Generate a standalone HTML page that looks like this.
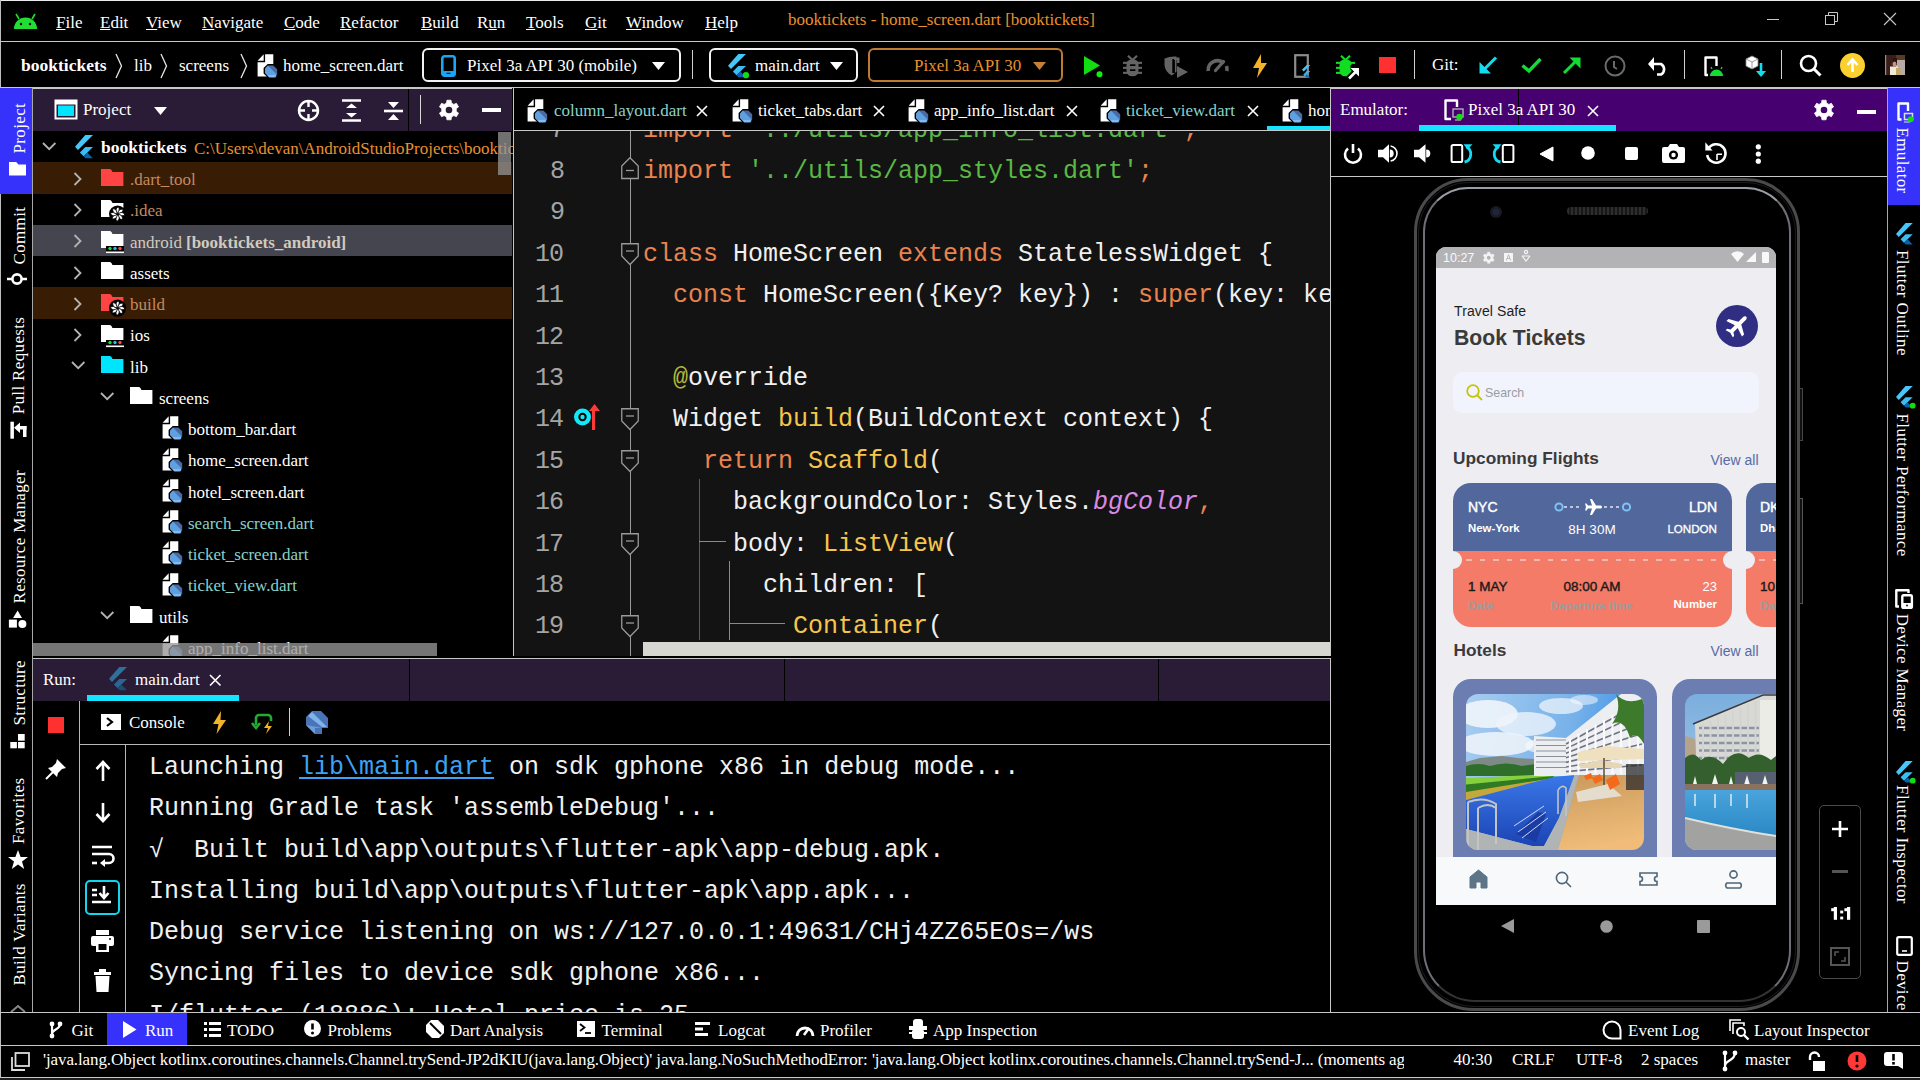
<!DOCTYPE html><html><head><meta charset="utf-8"><title>Android Studio</title><style>
html,body{margin:0;padding:0;background:#000;width:1920px;height:1080px;overflow:hidden}
body{position:relative;font-family:"Liberation Serif",serif}
body>div,body>svg{position:absolute}
.t{position:absolute;line-height:1;white-space:pre}
svg{position:absolute;overflow:visible}

</style></head><body>
<div style="position:absolute;left:0px;top:0px;width:1920px;height:1px;background:#ececec;"></div>
<div style="position:absolute;left:0px;top:0px;width:1px;height:1078px;background:#bdbdbd;"></div>
<div style="position:absolute;left:0px;top:41px;width:1920px;height:1px;background:#c8c8c8;"></div>
<svg style="left:13px;top:13px;" width="25" height="17" viewBox="0 0 25 17"><path d="M1 16 A11.5 11.5 0 0 1 24 16 Z" fill="#22dd33"/><line x1="6" y1="6" x2="3" y2="1" stroke="#22dd33" stroke-width="1.6"/><line x1="19" y1="6" x2="22" y2="1" stroke="#22dd33" stroke-width="1.6"/><circle cx="8" cy="11" r="1.2" fill="#000"/><circle cx="17" cy="11" r="1.2" fill="#000"/></svg>
<div class="t" style="left:56px;top:13.80px;font-size:17px;color:#fff;"><u>F</u>ile</div>
<div class="t" style="left:100px;top:13.80px;font-size:17px;color:#fff;"><u>E</u>dit</div>
<div class="t" style="left:146px;top:13.80px;font-size:17px;color:#fff;"><u>V</u>iew</div>
<div class="t" style="left:202px;top:13.80px;font-size:17px;color:#fff;"><u>N</u>avigate</div>
<div class="t" style="left:284px;top:13.80px;font-size:17px;color:#fff;"><u>C</u>ode</div>
<div class="t" style="left:340px;top:13.80px;font-size:17px;color:#fff;"><u>R</u>efactor</div>
<div class="t" style="left:421px;top:13.80px;font-size:17px;color:#fff;"><u>B</u>uild</div>
<div class="t" style="left:477px;top:13.80px;font-size:17px;color:#fff;">R<u>u</u>n</div>
<div class="t" style="left:526px;top:13.80px;font-size:17px;color:#fff;"><u>T</u>ools</div>
<div class="t" style="left:585px;top:13.80px;font-size:17px;color:#fff;"><u>G</u>it</div>
<div class="t" style="left:626px;top:13.80px;font-size:17px;color:#fff;"><u>W</u>indow</div>
<div class="t" style="left:705px;top:13.80px;font-size:17px;color:#fff;"><u>H</u>elp</div>
<div class="t" style="left:788px;top:11.30px;font-size:17px;color:#e8902e;">booktickets - home_screen.dart [booktickets]</div>
<svg style="left:1767px;top:12px;" width="130" height="15" viewBox="0 0 130 15"><line x1="0" y1="7.5" x2="12" y2="7.5" stroke="#c8c8c8" stroke-width="1"/><rect x="58.5" y="3.5" width="9" height="9" fill="none" stroke="#c8c8c8"/><path d="M61.5 3.5 V0.5 H70.5 V9.5 H67.5" fill="none" stroke="#c8c8c8"/><path d="M117 1 L129 13 M129 1 L117 13" stroke="#c8c8c8" stroke-width="1.1"/></svg>
<div style="position:absolute;left:0px;top:87px;width:1920px;height:1px;background:#c8c8c8;"></div>
<div class="t" style="left:21px;top:56.69px;font-size:17.5px;color:#fff;font-weight:bold;">booktickets</div>
<svg style="left:115px;top:54px;" width="8" height="24" viewBox="0 0 8 24"><path d="M1 0 L6.5 12 L1 24" fill="none" stroke="#e6e6e6" stroke-width="1.3"/></svg>
<div class="t" style="left:134px;top:57.10px;font-size:17px;color:#fff;">lib</div>
<svg style="left:160px;top:54px;" width="8" height="24" viewBox="0 0 8 24"><path d="M1 0 L6.5 12 L1 24" fill="none" stroke="#e6e6e6" stroke-width="1.3"/></svg>
<div class="t" style="left:179px;top:57.10px;font-size:17px;color:#fff;">screens</div>
<svg style="left:240px;top:54px;" width="8" height="24" viewBox="0 0 8 24"><path d="M1 0 L6.5 12 L1 24" fill="none" stroke="#e6e6e6" stroke-width="1.3"/></svg>
<svg style="left:255px;top:54px;" width="24" height="25" viewBox="0 0 24 25"><path d="M2.6 8.3 H10.1 V0.2 H18.3 V22.4 H2.6 Z" fill="#fff"/><path d="M2.6 6.7 L8.7 0.3 V6.7 Z" fill="#fff"/><path d="M13 10.8 H18.6 L22.9 15 V20.6 L20 23.9 H14 L9.3 19.2 V14.4 Z" fill="#4a6aa2" stroke="#000" stroke-width="1.4"/><path d="M10 14.6 L12.9 11.6 L21.2 20 V23.3 H14.2 L10 19 Z" fill="#60a0e0"/><path d="M12.5 21 H21.2 L19.8 23.3 H14.4 Z" fill="#7ebcf2"/></svg>
<div class="t" style="left:283px;top:57.10px;font-size:17px;color:#fff;">home_screen.dart</div>
<div style="left:422px;top:48px;width:255px;height:30px;border:2px solid #f2f2f2;border-radius:6px"></div>
<svg style="left:441px;top:54.5px;" width="15" height="22" viewBox="0 0 15 22"><rect x="1.3" y="1.3" width="12.4" height="19.4" rx="2.2" fill="none" stroke="#1aa6f2" stroke-width="2.6"/><rect x="1.3" y="16" width="12.4" height="4.7" rx="1" fill="#1aa6f2"/><path d="M5.5 18.3 H9.5" stroke="#000" stroke-width="1"/></svg>
<div class="t" style="left:467px;top:56.80px;font-size:17px;color:#fff;">Pixel 3a API 30 (mobile)</div>
<svg style="left:652px;top:62px;" width="14" height="8" viewBox="0 0 14 8"><path d="M0 0 H13 L6.5 8 Z" fill="#fff"/></svg>
<div style="position:absolute;left:692px;top:50px;width:1px;height:29px;background:#d0d0d0;"></div>
<div style="left:709px;top:48px;width:145px;height:30px;border:2px solid #f2f2f2;border-radius:6px"></div>
<svg style="left:727.5px;top:54px;" width="22.0" height="25.0" viewBox="0 0 22.0 25.0"><g transform="scale(1.0)"><path d="M10.3 0 H18 L3 15 L0 11.8 Z" fill="#47c6fa"/><path d="M10.3 12 H18 L8.6 21.3 L4.9 17.5 Z" fill="#3dbbf3"/><path d="M8.6 21.3 L12.3 17.6 L17.9 23.2 H10.5 Z" fill="#0b62ab"/><circle cx="18" cy="21.2" r="3.1" fill="#11dd11"/></g></svg>
<div class="t" style="left:755px;top:56.80px;font-size:17px;color:#fff;">main.dart</div>
<svg style="left:830px;top:62px;" width="14" height="8" viewBox="0 0 14 8"><path d="M0 0 H13 L6.5 8 Z" fill="#fff"/></svg>
<div style="left:868px;top:48px;width:191px;height:30px;border:2px solid #c07a30;border-radius:6px"></div>
<div class="t" style="left:914px;top:56.80px;font-size:17px;color:#e8902e;">Pixel 3a API 30</div>
<svg style="left:1033px;top:62px;" width="14" height="8" viewBox="0 0 14 8"><path d="M0 0 H13 L6.5 8 Z" fill="#c77f33"/></svg>
<svg style="left:1084px;top:56px;" width="20" height="22" viewBox="0 0 20 22"><path d="M0 0 L16 9.5 L0 19 Z" fill="#11dd11"/><circle cx="15.5" cy="18.3" r="3" fill="#11ee11"/></svg>
<svg style="left:1123px;top:55px;" width="19" height="22" viewBox="0 0 19 22"><path d="M5 0.8 L9.5 5 L14 0.8" fill="none" stroke="#646464" stroke-width="2.2"/><path d="M3.5 9 Q3.5 4.5 9.5 4.5 Q15.5 4.5 15.5 9 V15 Q15.5 21.3 9.5 21.3 Q3.5 21.3 3.5 15 Z" fill="#646464"/><rect x="0" y="6.8" width="19" height="2.1" fill="#646464"/><rect x="0" y="11.8" width="19" height="2.1" fill="#646464"/><rect x="0" y="16.8" width="19" height="2.1" fill="#646464"/><rect x="7" y="9.3" width="5.4" height="1.7" fill="#000"/><rect x="7" y="14.3" width="5.4" height="1.7" fill="#000"/></svg>
<svg style="left:1164px;top:56px;" width="24" height="22" viewBox="0 0 24 22"><path d="M0.5 2.5 Q6 0 12.5 0.5 V15.5 L8 19.5 Q1 16 0.5 9 Z" fill="#646464"/><rect x="8.3" y="3" width="2.6" height="14" fill="#000"/><path d="M10 1.5 H15.5 V7 H12.8 V4 H10 Z" fill="#646464"/><path d="M13 10 L24 16 L13 22 Z" fill="#646464"/></svg>
<svg style="left:1206px;top:57px;" width="23" height="16" viewBox="0 0 23 16"><path d="M2.2 14 A9.3 9.3 0 0 1 18 6.5" fill="none" stroke="#646464" stroke-width="3.6"/><path d="M20.5 9 A9.3 9.3 0 0 1 20.8 14" fill="none" stroke="#646464" stroke-width="3.6"/><path d="M9.5 13.5 L17.5 4.5" stroke="#646464" stroke-width="3.2" stroke-linecap="round"/></svg>
<svg style="left:1252px;top:54px;" width="16" height="24" viewBox="0 0 16 24"><path d="M9 0 L1 14 H7 L5 24 L15 9 H9 Z" fill="#f2b32a"/></svg>
<svg style="left:1294px;top:54px;" width="17" height="24" viewBox="0 0 17 24"><rect x="1.2" y="1.2" width="12.6" height="21.6" fill="none" stroke="#8c8c8c" stroke-width="2.2"/><g transform="translate(7,11) scale(0.55)"><path d="M10.5 0 H17 L5 12 L1.5 8.5 Z" fill="#45c4f5"/><path d="M10.5 11 H17 L10.6 17.4 L7.3 14.2 Z" fill="#40b3ee"/><path d="M7.3 14.2 L10.6 17.4 L17 23 H10.5 L7.3 19.8 Z" fill="#0d6cb0"/><path d="M4 17.5 L7.3 14.2 L10.6 17.4 L7.3 20.6 Z" fill="#40b3ee"/></g></svg>
<svg style="left:1336px;top:55px;" width="25" height="25" viewBox="0 0 25 25"><path d="M5 0.8 L9.5 5 L14 0.8" fill="none" stroke="#11dd22" stroke-width="2.2"/><path d="M3.5 9 Q3.5 4.5 9.5 4.5 Q15.5 4.5 15.5 9 V15 Q15.5 21.3 9.5 21.3 Q3.5 21.3 3.5 15 Z" fill="#11dd22"/><rect x="0" y="6.8" width="19" height="2.1" fill="#11dd22"/><rect x="0" y="11.8" width="19" height="2.1" fill="#11dd22"/><rect x="0" y="16.8" width="19" height="2.1" fill="#11dd22"/><path d="M12.5 23 L21.5 14 M14.5 12.5 H22.5 V20.5" fill="none" stroke="#000" stroke-width="5"/><path d="M13 23.5 L21.5 15" stroke="#fff" stroke-width="2.6"/><path d="M14.5 13 H23 V21.5 Z" fill="#fff"/></svg>
<div style="position:absolute;left:1379px;top:57px;width:17px;height:16px;background:#ff3030;"></div>
<div style="position:absolute;left:1414px;top:50px;width:1px;height:29px;background:#d0d0d0;"></div>
<div class="t" style="left:1432px;top:55.80px;font-size:17px;color:#fff;">Git:</div>
<svg style="left:1479px;top:56px;" width="19" height="18" viewBox="0 0 19 18"><path d="M17 1.5 L3 15.5" stroke="#11ddee" stroke-width="3"/><path d="M0.5 6 V17.5 H12 Z" fill="#11ddee"/></svg>
<svg style="left:1521px;top:57px;" width="21" height="16" viewBox="0 0 21 16"><path d="M1.5 8.5 L8 14 L19.5 2" fill="none" stroke="#11dd33" stroke-width="3.4"/></svg>
<svg style="left:1563px;top:57px;" width="18" height="17" viewBox="0 0 18 17"><path d="M1 16 L15 2" stroke="#11dd33" stroke-width="3"/><path d="M6.5 0.5 H17.5 V11.5 Z" fill="#11dd33"/></svg>
<svg style="left:1604px;top:55px;" width="22" height="22" viewBox="0 0 22 22"><circle cx="11" cy="11" r="9.5" fill="none" stroke="#6a6a6a" stroke-width="2"/><path d="M10 6 V12 L13 14" fill="none" stroke="#6a6a6a" stroke-width="2"/></svg>
<svg style="left:1648px;top:55px;" width="21" height="21" viewBox="0 0 21 21"><path d="M4 9 H13 A6 6 0 0 1 13 19.5 H9" fill="none" stroke="#fff" stroke-width="2.6"/><path d="M0 9 L6 2 V16 Z" fill="#fff"/></svg>
<div style="position:absolute;left:1684px;top:50px;width:1px;height:29px;background:#d0d0d0;"></div>
<svg style="left:1704px;top:56px;" width="21" height="21" viewBox="0 0 21 21"><path d="M4 19 H1.5 V1.5 H12.5 V10" fill="none" stroke="#fff" stroke-width="2.4" stroke-linejoin="round"/><path d="M6 20 A6.5 6.5 0 0 1 19 20 Z" fill="#11dd33"/><path d="M8 13 L7 11 M17 13 L18 11" stroke="#11dd33" stroke-width="1.3"/></svg>
<svg style="left:1744px;top:55px;" width="24" height="23" viewBox="0 0 24 23"><path d="M2 4 L8 1 L14 4 V11 L8 14 L2 11 Z" fill="#fff" stroke="#888" stroke-width="0.8"/><path d="M2 4 L8 7 L14 4 M8 7 V14" stroke="#888" stroke-width="0.8" fill="none"/><path d="M17 8 V19" stroke="#11ddee" stroke-width="2.6"/><path d="M12 16 H22 L17 22 Z" fill="#11ddee"/></svg>
<div style="position:absolute;left:1781px;top:50px;width:1px;height:29px;background:#d0d0d0;"></div>
<svg style="left:1799px;top:54px;" width="23" height="23" viewBox="0 0 23 23"><circle cx="9.5" cy="9.5" r="7.5" fill="none" stroke="#fff" stroke-width="2.6"/><path d="M15 15 L21.5 21.5" stroke="#fff" stroke-width="3"/></svg>
<svg style="left:1840px;top:53px;" width="25" height="25" viewBox="0 0 25 25"><circle cx="12.5" cy="12.5" r="12.5" fill="#fcd02e"/><path d="M12.5 19 V7 M7.5 12 L12.5 6.5 L17.5 12" fill="none" stroke="#fff" stroke-width="2.6"/></svg>
<svg style="left:1885px;top:55px;filter:blur(0.4px)" width="20" height="20" viewBox="0 0 20 20"><rect width="20" height="20" fill="#3a1f18"/><rect x="0" y="0" width="1.2" height="20" fill="#9a8a88"/><rect x="11" y="0" width="9" height="5" fill="#5a3a22"/><rect x="11" y="5" width="9" height="15" fill="#b8aca8"/><rect x="8" y="3" width="4" height="7" fill="#2a1410"/><ellipse cx="9.5" cy="9" rx="2" ry="2.5" fill="#c89080"/><rect x="5" y="11.5" width="8" height="8.5" fill="#f0e8d8"/><rect x="11" y="13" width="4.5" height="7" fill="#c8a860"/></svg>
<div style="position:absolute;left:0px;top:88px;width:33px;height:106px;background:#3631fb;"></div>
<div style="position:absolute;left:32px;top:88px;width:1px;height:924px;background:#a8a8a8;"></div>
<div class="t" style="left:-6.50px;top:119.50px;width:50px;font-size:17px;color:#fff;transform:rotate(-90deg);text-align:center;letter-spacing:0.35px;">Project</div>
<svg style="left:9px;top:162px;" width="17" height="14" viewBox="0 0 17 14"><path d="M0 0 H6.5 Q7.5 0 8.2 1 L9.3 2.6 H17 V13.6 H0 Z" fill="#fff"/></svg>
<div class="t" style="left:-8.50px;top:228.50px;width:54px;font-size:17px;color:#fff;transform:rotate(-90deg);text-align:center;letter-spacing:0.35px;">Commit</div>
<svg style="left:7px;top:272px;" width="20" height="14" viewBox="0 0 20 14"><circle cx="10" cy="7" r="4.6" fill="none" stroke="#fff" stroke-width="2.6"/><path d="M0 7 H5.2 M14.8 7 H20" stroke="#fff" stroke-width="2.6"/></svg>
<div class="t" style="left:-37.00px;top:357.00px;width:111px;font-size:17px;color:#fff;transform:rotate(-90deg);text-align:center;letter-spacing:0.35px;">Pull Requests</div>
<svg style="left:10px;top:421px;" width="17" height="18" viewBox="0 0 17 18"><rect x="0.4" y="0.7" width="3.5" height="17" fill="#fff"/><path d="M4 6.7 L10 1.5 V12 Z" fill="#fff"/><rect x="9" y="5" width="7.5" height="3.5" fill="#fff"/><rect x="13" y="5" width="3.5" height="11" fill="#fff"/></svg>
<div class="t" style="left:-47.50px;top:528.50px;width:132px;font-size:17px;color:#fff;transform:rotate(-90deg);text-align:center;letter-spacing:0.35px;">Resource Manager</div>
<svg style="left:8px;top:610px;" width="19" height="19" viewBox="0 0 19 19"><path d="M9.6 0.4 L14 8 H5.1 Z" fill="#fff"/><rect x="0.9" y="9.6" width="8" height="8" fill="#fff"/><circle cx="14.4" cy="14" r="4" fill="#fff"/></svg>
<div class="t" style="left:-13.50px;top:684.50px;width:64px;font-size:17px;color:#fff;transform:rotate(-90deg);text-align:center;letter-spacing:0.35px;">Structure</div>
<svg style="left:10px;top:733px;" width="15" height="16" viewBox="0 0 15 16"><rect x="8" y="1" width="6.7" height="6.7" fill="#fff"/><rect x="0.3" y="9" width="6.6" height="6.3" fill="#fff"/><rect x="8" y="9" width="6.7" height="6.3" fill="#fff"/></svg>
<div class="t" style="left:-14.00px;top:803.00px;width:65px;font-size:17px;color:#fff;transform:rotate(-90deg);text-align:center;letter-spacing:0.35px;">Favorites</div>
<svg style="left:8px;top:850px;" width="20" height="20" viewBox="0 0 20 20"><path d="M10 0 L12.6 7 H20 L14 11.5 L16.2 19 L10 14.5 L3.8 19 L6 11.5 L0 7 H7.4 Z" fill="#fff"/></svg>
<div class="t" style="left:-25.50px;top:932.50px;width:88px;font-size:17px;color:#fff;transform:rotate(-90deg);text-align:center;letter-spacing:0.35px;">Build Variants</div>
<svg style="left:10px;top:1004px;" width="16" height="8" viewBox="0 0 16 8"><path d="M1 8 L8 2 L15 8" fill="none" stroke="#888" stroke-width="2"/></svg>
<div style="position:absolute;left:33px;top:88px;width:480px;height:1px;background:#c8c8c8;"></div>
<div style="position:absolute;left:33px;top:89px;width:479px;height:42px;background:#2a1b36;"></div>
<div style="position:absolute;left:408px;top:89px;width:1px;height:42px;background:#000;"></div>
<svg style="left:54px;top:99px;" width="24" height="21" viewBox="0 0 24 21"><rect x="1.5" y="1.5" width="21" height="18" fill="none" stroke="#fff" stroke-width="2"/><rect x="1.5" y="1.5" width="21" height="4" fill="#fff"/><rect x="4" y="6.5" width="16" height="10.5" fill="#00e5ff"/></svg>
<div class="t" style="left:83px;top:101.31px;font-size:17px;color:#fff;">Project</div>
<svg style="left:154px;top:107px;" width="14" height="8" viewBox="0 0 14 8"><path d="M0 0 H13 L6.5 8 Z" fill="#fff"/></svg>
<svg style="left:297px;top:99px;" width="23" height="23" viewBox="0 0 23 23"><circle cx="11.5" cy="11.5" r="9.5" fill="none" stroke="#fff" stroke-width="2.4"/><path d="M11.5 2 V8 M11.5 15 V21 M2 11.5 H8 M15 11.5 H21" stroke="#fff" stroke-width="2.4"/></svg>
<svg style="left:342px;top:99px;" width="19" height="23" viewBox="0 0 19 23"><path d="M0 1.5 H19 M0 21.5 H19" stroke="#fff" stroke-width="2.6"/><path d="M4 9 L9.5 4.5 L15 9 Z M4 14 L9.5 18.5 L15 14 Z" fill="#fff"/></svg>
<svg style="left:384px;top:101px;" width="19" height="20" viewBox="0 0 19 20"><path d="M0 10 H19" stroke="#fff" stroke-width="2.6"/><path d="M4 1 H15 L9.5 7 Z M4 19 H15 L9.5 13 Z" fill="#fff"/></svg>
<div style="position:absolute;left:420px;top:95px;width:1px;height:29px;background:#d8d8d8;"></div>
<svg style="left:439px;top:100px;" width="20" height="20" viewBox="0 0 20 20"><g transform="scale(1.0)"><polygon points="7.59,3.00 7.92,0.22 12.08,0.22 12.41,3.00 14.85,4.42 17.43,3.31 19.51,6.91 17.26,8.59 17.26,11.41 19.51,13.09 17.43,16.69 14.85,15.58 12.41,17.00 12.08,19.78 7.92,19.78 7.59,17.00 5.15,15.58 2.57,16.69 0.49,13.09 2.74,11.41 2.74,8.59 0.49,6.91 2.57,3.31 5.15,4.42" fill="#fff" stroke="#fff" stroke-width="0.8" stroke-linejoin="round"/><circle cx="10" cy="10" r="3.3" fill="#2a1b36"/></g></svg>
<div style="position:absolute;left:482px;top:108px;width:19px;height:4px;background:#fff;"></div>
<div style="position:absolute;left:512px;top:88px;width:1px;height:570px;background:#000;"></div>
<div style="position:absolute;left:33px;top:162.25px;width:479px;height:31.25px;background:#381d04;"></div>
<div style="position:absolute;left:33px;top:224.75px;width:479px;height:31.25px;background:#45454f;"></div>
<div style="position:absolute;left:33px;top:287.25px;width:479px;height:31.25px;background:#381d04;"></div>
<svg style="left:42.2px;top:141.7px;" width="15" height="9" viewBox="0 0 15 9"><path d="M1 1 L7.2 7.2 L13.4 1" fill="none" stroke="#b4b4b4" stroke-width="1.8"/></svg>
<svg style="left:75px;top:135.0px;" width="22.0" height="25.0" viewBox="0 0 22.0 25.0"><g transform="scale(1.0)"><path d="M10.3 0 H18 L3 15 L0 11.8 Z" fill="#47c6fa"/><path d="M10.3 12 H18 L8.6 21.3 L4.9 17.5 Z" fill="#3dbbf3"/><path d="M8.6 21.3 L12.3 17.6 L17.9 23.2 H10.5 Z" fill="#0b62ab"/></g></svg>
<div class="t" style="left:101px;top:139.39px;font-size:17.5px;color:#fff;font-weight:bold;">booktickets</div>
<div class="t" style="left:194px;top:139.81px;font-size:17px;color:#e8902e;">C:\Users\devan\AndroidStudioProjects\booktickets</div>
<svg style="left:73px;top:171.75px;" width="10" height="14" viewBox="0 0 10 14"><path d="M1.5 1 L7.5 7 L1.5 13" fill="none" stroke="#b4b4b4" stroke-width="1.8"/></svg>
<svg style="left:101px;top:168.65px;" width="24" height="24" viewBox="0 0 24 24"><path d="M0 0 H8.5 Q9.8 0 10.6 1.2 L11.5 3 H22.4 V17.1 H0 Z" fill="#ff4444"/></svg>
<div class="t" style="left:130px;top:171.06px;font-size:17px;color:#c48a62;">.dart_tool</div>
<svg style="left:73px;top:203.0px;" width="10" height="14" viewBox="0 0 10 14"><path d="M1.5 1 L7.5 7 L1.5 13" fill="none" stroke="#b4b4b4" stroke-width="1.8"/></svg>
<svg style="left:101px;top:199.9px;" width="24" height="24" viewBox="0 0 24 24"><path d="M0 0 H8.5 Q9.8 0 10.6 1.2 L11.5 3 H22.4 V17.1 H0 Z" fill="#fff"/><g transform="translate(16.6,14.1)"><circle r="8.6" fill="#000"/><path d="M0 -0.6 C-2.2 -2.6 -2.2 -6 0.9 -7.2 C2.2 -5.2 1.6 -2.4 0 -0.6 Z" fill="#fff" stroke="#000" stroke-width="0.8" transform="rotate(0)"/><path d="M0 -0.6 C-2.2 -2.6 -2.2 -6 0.9 -7.2 C2.2 -5.2 1.6 -2.4 0 -0.6 Z" fill="#fff" stroke="#000" stroke-width="0.8" transform="rotate(45)"/><path d="M0 -0.6 C-2.2 -2.6 -2.2 -6 0.9 -7.2 C2.2 -5.2 1.6 -2.4 0 -0.6 Z" fill="#fff" stroke="#000" stroke-width="0.8" transform="rotate(90)"/><path d="M0 -0.6 C-2.2 -2.6 -2.2 -6 0.9 -7.2 C2.2 -5.2 1.6 -2.4 0 -0.6 Z" fill="#fff" stroke="#000" stroke-width="0.8" transform="rotate(135)"/><path d="M0 -0.6 C-2.2 -2.6 -2.2 -6 0.9 -7.2 C2.2 -5.2 1.6 -2.4 0 -0.6 Z" fill="#fff" stroke="#000" stroke-width="0.8" transform="rotate(180)"/><path d="M0 -0.6 C-2.2 -2.6 -2.2 -6 0.9 -7.2 C2.2 -5.2 1.6 -2.4 0 -0.6 Z" fill="#fff" stroke="#000" stroke-width="0.8" transform="rotate(225)"/><path d="M0 -0.6 C-2.2 -2.6 -2.2 -6 0.9 -7.2 C2.2 -5.2 1.6 -2.4 0 -0.6 Z" fill="#fff" stroke="#000" stroke-width="0.8" transform="rotate(270)"/><path d="M0 -0.6 C-2.2 -2.6 -2.2 -6 0.9 -7.2 C2.2 -5.2 1.6 -2.4 0 -0.6 Z" fill="#fff" stroke="#000" stroke-width="0.8" transform="rotate(315)"/></g></svg>
<div class="t" style="left:130px;top:202.31px;font-size:17px;color:#c48a62;">.idea</div>
<svg style="left:73px;top:234.25px;" width="10" height="14" viewBox="0 0 10 14"><path d="M1.5 1 L7.5 7 L1.5 13" fill="none" stroke="#b4b4b4" stroke-width="1.8"/></svg>
<svg style="left:101px;top:231.15px;" width="24" height="24" viewBox="0 0 24 24"><path d="M0 0 H8.5 Q9.8 0 10.6 1.2 L11.5 3 H22.4 V17.1 H0 Z" fill="#fff"/><rect x="5" y="15" width="18" height="6" fill="#000"/><circle cx="9" cy="17.5" r="1.7" fill="#11dd33"/><circle cx="14" cy="17.5" r="1.7" fill="#22bbee"/><circle cx="19" cy="17.5" r="1.7" fill="#ff4444"/><rect x="5" y="20.5" width="18" height="1.6" fill="#fff"/></svg>
<div class="t" style="left:130px;top:233.56px;font-size:17px;color:#d2cabe;">android </div>
<div class="t" style="left:186px;top:233.56px;font-size:17px;color:#d2cabe;font-weight:bold;">[booktickets_android]</div>
<svg style="left:73px;top:265.5px;" width="10" height="14" viewBox="0 0 10 14"><path d="M1.5 1 L7.5 7 L1.5 13" fill="none" stroke="#b4b4b4" stroke-width="1.8"/></svg>
<svg style="left:101px;top:262.4px;" width="24" height="24" viewBox="0 0 24 24"><path d="M0 0 H8.5 Q9.8 0 10.6 1.2 L11.5 3 H22.4 V17.1 H0 Z" fill="#fff"/></svg>
<div class="t" style="left:130px;top:264.81px;font-size:17px;color:#fff;">assets</div>
<svg style="left:73px;top:296.75px;" width="10" height="14" viewBox="0 0 10 14"><path d="M1.5 1 L7.5 7 L1.5 13" fill="none" stroke="#b4b4b4" stroke-width="1.8"/></svg>
<svg style="left:101px;top:293.65px;" width="24" height="24" viewBox="0 0 24 24"><path d="M0 0 H8.5 Q9.8 0 10.6 1.2 L11.5 3 H22.4 V17.1 H0 Z" fill="#ff4444"/><g transform="translate(16.6,14.1)"><circle r="8.6" fill="#000"/><path d="M0 -0.6 C-2.2 -2.6 -2.2 -6 0.9 -7.2 C2.2 -5.2 1.6 -2.4 0 -0.6 Z" fill="#fff" stroke="#000" stroke-width="0.8" transform="rotate(0)"/><path d="M0 -0.6 C-2.2 -2.6 -2.2 -6 0.9 -7.2 C2.2 -5.2 1.6 -2.4 0 -0.6 Z" fill="#fff" stroke="#000" stroke-width="0.8" transform="rotate(45)"/><path d="M0 -0.6 C-2.2 -2.6 -2.2 -6 0.9 -7.2 C2.2 -5.2 1.6 -2.4 0 -0.6 Z" fill="#fff" stroke="#000" stroke-width="0.8" transform="rotate(90)"/><path d="M0 -0.6 C-2.2 -2.6 -2.2 -6 0.9 -7.2 C2.2 -5.2 1.6 -2.4 0 -0.6 Z" fill="#fff" stroke="#000" stroke-width="0.8" transform="rotate(135)"/><path d="M0 -0.6 C-2.2 -2.6 -2.2 -6 0.9 -7.2 C2.2 -5.2 1.6 -2.4 0 -0.6 Z" fill="#fff" stroke="#000" stroke-width="0.8" transform="rotate(180)"/><path d="M0 -0.6 C-2.2 -2.6 -2.2 -6 0.9 -7.2 C2.2 -5.2 1.6 -2.4 0 -0.6 Z" fill="#fff" stroke="#000" stroke-width="0.8" transform="rotate(225)"/><path d="M0 -0.6 C-2.2 -2.6 -2.2 -6 0.9 -7.2 C2.2 -5.2 1.6 -2.4 0 -0.6 Z" fill="#fff" stroke="#000" stroke-width="0.8" transform="rotate(270)"/><path d="M0 -0.6 C-2.2 -2.6 -2.2 -6 0.9 -7.2 C2.2 -5.2 1.6 -2.4 0 -0.6 Z" fill="#fff" stroke="#000" stroke-width="0.8" transform="rotate(315)"/></g></svg>
<div class="t" style="left:130px;top:296.06px;font-size:17px;color:#c48a62;">build</div>
<svg style="left:73px;top:328.0px;" width="10" height="14" viewBox="0 0 10 14"><path d="M1.5 1 L7.5 7 L1.5 13" fill="none" stroke="#b4b4b4" stroke-width="1.8"/></svg>
<svg style="left:101px;top:324.9px;" width="24" height="24" viewBox="0 0 24 24"><path d="M0 0 H8.5 Q9.8 0 10.6 1.2 L11.5 3 H22.4 V17.1 H0 Z" fill="#fff"/><rect x="5" y="15" width="18" height="6" fill="#000"/><circle cx="9" cy="17.5" r="1.7" fill="#11dd33"/><circle cx="14" cy="17.5" r="1.7" fill="#22bbee"/><circle cx="19" cy="17.5" r="1.7" fill="#ff4444"/><rect x="5" y="20.5" width="18" height="1.6" fill="#fff"/></svg>
<div class="t" style="left:130px;top:327.31px;font-size:17px;color:#fff;">ios</div>
<svg style="left:71.2px;top:360.95px;" width="15" height="9" viewBox="0 0 15 9"><path d="M1 1 L7.2 7.2 L13.4 1" fill="none" stroke="#b4b4b4" stroke-width="1.8"/></svg>
<svg style="left:101px;top:356.15px;" width="24" height="24" viewBox="0 0 24 24"><path d="M0 0 H8.5 Q9.8 0 10.6 1.2 L11.5 3 H22.4 V17.1 H0 Z" fill="#00e5ff"/></svg>
<div class="t" style="left:130px;top:358.56px;font-size:17px;color:#fff;">lib</div>
<svg style="left:100.2px;top:392.2px;" width="15" height="9" viewBox="0 0 15 9"><path d="M1 1 L7.2 7.2 L13.4 1" fill="none" stroke="#b4b4b4" stroke-width="1.8"/></svg>
<svg style="left:130px;top:387.4px;" width="24" height="24" viewBox="0 0 24 24"><path d="M0 0 H8.5 Q9.8 0 10.6 1.2 L11.5 3 H22.4 V17.1 H0 Z" fill="#fff"/></svg>
<div class="t" style="left:159px;top:389.81px;font-size:17px;color:#fff;">screens</div>
<svg style="left:160px;top:416.25px;" width="24" height="25" viewBox="0 0 24 25"><path d="M2.6 8.3 H10.1 V0.2 H18.3 V22.4 H2.6 Z" fill="#fff"/><path d="M2.6 6.7 L8.7 0.3 V6.7 Z" fill="#fff"/><path d="M13 10.8 H18.6 L22.9 15 V20.6 L20 23.9 H14 L9.3 19.2 V14.4 Z" fill="#4a6aa2" stroke="#000" stroke-width="1.4"/><path d="M10 14.6 L12.9 11.6 L21.2 20 V23.3 H14.2 L10 19 Z" fill="#60a0e0"/><path d="M12.5 21 H21.2 L19.8 23.3 H14.4 Z" fill="#7ebcf2"/></svg>
<div class="t" style="left:188px;top:421.06px;font-size:17px;color:#fff;">bottom_bar.dart</div>
<svg style="left:160px;top:447.5px;" width="24" height="25" viewBox="0 0 24 25"><path d="M2.6 8.3 H10.1 V0.2 H18.3 V22.4 H2.6 Z" fill="#fff"/><path d="M2.6 6.7 L8.7 0.3 V6.7 Z" fill="#fff"/><path d="M13 10.8 H18.6 L22.9 15 V20.6 L20 23.9 H14 L9.3 19.2 V14.4 Z" fill="#4a6aa2" stroke="#000" stroke-width="1.4"/><path d="M10 14.6 L12.9 11.6 L21.2 20 V23.3 H14.2 L10 19 Z" fill="#60a0e0"/><path d="M12.5 21 H21.2 L19.8 23.3 H14.4 Z" fill="#7ebcf2"/></svg>
<div class="t" style="left:188px;top:452.31px;font-size:17px;color:#fff;">home_screen.dart</div>
<svg style="left:160px;top:478.75px;" width="24" height="25" viewBox="0 0 24 25"><path d="M2.6 8.3 H10.1 V0.2 H18.3 V22.4 H2.6 Z" fill="#fff"/><path d="M2.6 6.7 L8.7 0.3 V6.7 Z" fill="#fff"/><path d="M13 10.8 H18.6 L22.9 15 V20.6 L20 23.9 H14 L9.3 19.2 V14.4 Z" fill="#4a6aa2" stroke="#000" stroke-width="1.4"/><path d="M10 14.6 L12.9 11.6 L21.2 20 V23.3 H14.2 L10 19 Z" fill="#60a0e0"/><path d="M12.5 21 H21.2 L19.8 23.3 H14.4 Z" fill="#7ebcf2"/></svg>
<div class="t" style="left:188px;top:483.56px;font-size:17px;color:#fff;">hotel_screen.dart</div>
<svg style="left:160px;top:510.0px;" width="24" height="25" viewBox="0 0 24 25"><path d="M2.6 8.3 H10.1 V0.2 H18.3 V22.4 H2.6 Z" fill="#fff"/><path d="M2.6 6.7 L8.7 0.3 V6.7 Z" fill="#fff"/><path d="M13 10.8 H18.6 L22.9 15 V20.6 L20 23.9 H14 L9.3 19.2 V14.4 Z" fill="#4a6aa2" stroke="#000" stroke-width="1.4"/><path d="M10 14.6 L12.9 11.6 L21.2 20 V23.3 H14.2 L10 19 Z" fill="#60a0e0"/><path d="M12.5 21 H21.2 L19.8 23.3 H14.4 Z" fill="#7ebcf2"/></svg>
<div class="t" style="left:188px;top:514.80px;font-size:17px;color:#8ad2c8;">search_screen.dart</div>
<svg style="left:160px;top:541.25px;" width="24" height="25" viewBox="0 0 24 25"><path d="M2.6 8.3 H10.1 V0.2 H18.3 V22.4 H2.6 Z" fill="#fff"/><path d="M2.6 6.7 L8.7 0.3 V6.7 Z" fill="#fff"/><path d="M13 10.8 H18.6 L22.9 15 V20.6 L20 23.9 H14 L9.3 19.2 V14.4 Z" fill="#4a6aa2" stroke="#000" stroke-width="1.4"/><path d="M10 14.6 L12.9 11.6 L21.2 20 V23.3 H14.2 L10 19 Z" fill="#60a0e0"/><path d="M12.5 21 H21.2 L19.8 23.3 H14.4 Z" fill="#7ebcf2"/></svg>
<div class="t" style="left:188px;top:546.05px;font-size:17px;color:#8ad2c8;">ticket_screen.dart</div>
<svg style="left:160px;top:572.5px;" width="24" height="25" viewBox="0 0 24 25"><path d="M2.6 8.3 H10.1 V0.2 H18.3 V22.4 H2.6 Z" fill="#fff"/><path d="M2.6 6.7 L8.7 0.3 V6.7 Z" fill="#fff"/><path d="M13 10.8 H18.6 L22.9 15 V20.6 L20 23.9 H14 L9.3 19.2 V14.4 Z" fill="#4a6aa2" stroke="#000" stroke-width="1.4"/><path d="M10 14.6 L12.9 11.6 L21.2 20 V23.3 H14.2 L10 19 Z" fill="#60a0e0"/><path d="M12.5 21 H21.2 L19.8 23.3 H14.4 Z" fill="#7ebcf2"/></svg>
<div class="t" style="left:188px;top:577.30px;font-size:17px;color:#8ad2c8;">ticket_view.dart</div>
<svg style="left:100.2px;top:610.95px;" width="15" height="9" viewBox="0 0 15 9"><path d="M1 1 L7.2 7.2 L13.4 1" fill="none" stroke="#b4b4b4" stroke-width="1.8"/></svg>
<svg style="left:130px;top:606.15px;" width="24" height="24" viewBox="0 0 24 24"><path d="M0 0 H8.5 Q9.8 0 10.6 1.2 L11.5 3 H22.4 V17.1 H0 Z" fill="#fff"/></svg>
<div class="t" style="left:159px;top:608.55px;font-size:17px;color:#fff;">utils</div>
<svg style="left:160px;top:635.0px;" width="24" height="25" viewBox="0 0 24 25"><path d="M2.6 8.3 H10.1 V0.2 H18.3 V22.4 H2.6 Z" fill="#fff"/><path d="M2.6 6.7 L8.7 0.3 V6.7 Z" fill="#fff"/><path d="M13 10.8 H18.6 L22.9 15 V20.6 L20 23.9 H14 L9.3 19.2 V14.4 Z" fill="#4a6aa2" stroke="#000" stroke-width="1.4"/><path d="M10 14.6 L12.9 11.6 L21.2 20 V23.3 H14.2 L10 19 Z" fill="#60a0e0"/><path d="M12.5 21 H21.2 L19.8 23.3 H14.4 Z" fill="#7ebcf2"/></svg>
<div class="t" style="left:188px;top:639.80px;font-size:17px;color:#fff;">app_info_list.dart</div>
<div style="position:absolute;left:33px;top:643px;width:404px;height:13px;background:rgba(150,150,150,0.78);"></div>
<div style="position:absolute;left:498px;top:132px;width:13px;height:43px;background:rgba(150,150,150,0.75);"></div>
<div style="position:absolute;left:33px;top:656px;width:480px;height:2px;background:#000;"></div>
<div style="position:absolute;left:513px;top:87px;width:818px;height:1px;background:#c8c8c8;"></div>
<div style="position:absolute;left:513px;top:88px;width:1px;height:570px;background:#c8c8c8;"></div>
<div style="position:absolute;left:514px;top:88px;width:816px;height:42px;background:#000;"></div>
<div style="position:absolute;left:513px;top:130px;width:818px;height:1px;background:#c8c8c8;"></div>
<div style="position:absolute;left:1330px;top:88px;width:1px;height:924px;background:#c8c8c8;"></div>
<svg style="left:525.4px;top:99px;" width="24" height="25" viewBox="0 0 24 25"><path d="M2.6 8.3 H10.1 V0.2 H18.3 V22.4 H2.6 Z" fill="#fff"/><path d="M2.6 6.7 L8.7 0.3 V6.7 Z" fill="#fff"/><path d="M13 10.8 H18.6 L22.9 15 V20.6 L20 23.9 H14 L9.3 19.2 V14.4 Z" fill="#4a6aa2" stroke="#000" stroke-width="1.4"/><path d="M10 14.6 L12.9 11.6 L21.2 20 V23.3 H14.2 L10 19 Z" fill="#60a0e0"/><path d="M12.5 21 H21.2 L19.8 23.3 H14.4 Z" fill="#7ebcf2"/></svg>
<div class="t" style="left:554px;top:102.10px;font-size:17px;color:#8ad2c8;">column_layout.dart</div>
<svg style="left:696px;top:105px;" width="12" height="12" viewBox="0 0 12 12"><path d="M1 1 L11 11 M11 1 L1 11" stroke="#fff" stroke-width="1.6"/></svg>
<svg style="left:730px;top:99px;" width="24" height="25" viewBox="0 0 24 25"><path d="M2.6 8.3 H10.1 V0.2 H18.3 V22.4 H2.6 Z" fill="#fff"/><path d="M2.6 6.7 L8.7 0.3 V6.7 Z" fill="#fff"/><path d="M13 10.8 H18.6 L22.9 15 V20.6 L20 23.9 H14 L9.3 19.2 V14.4 Z" fill="#4a6aa2" stroke="#000" stroke-width="1.4"/><path d="M10 14.6 L12.9 11.6 L21.2 20 V23.3 H14.2 L10 19 Z" fill="#60a0e0"/><path d="M12.5 21 H21.2 L19.8 23.3 H14.4 Z" fill="#7ebcf2"/></svg>
<div class="t" style="left:758px;top:102.10px;font-size:17px;color:#fff;">ticket_tabs.dart</div>
<svg style="left:873px;top:105px;" width="12" height="12" viewBox="0 0 12 12"><path d="M1 1 L11 11 M11 1 L1 11" stroke="#fff" stroke-width="1.6"/></svg>
<svg style="left:906.4px;top:99px;" width="24" height="25" viewBox="0 0 24 25"><path d="M2.6 8.3 H10.1 V0.2 H18.3 V22.4 H2.6 Z" fill="#fff"/><path d="M2.6 6.7 L8.7 0.3 V6.7 Z" fill="#fff"/><path d="M13 10.8 H18.6 L22.9 15 V20.6 L20 23.9 H14 L9.3 19.2 V14.4 Z" fill="#4a6aa2" stroke="#000" stroke-width="1.4"/><path d="M10 14.6 L12.9 11.6 L21.2 20 V23.3 H14.2 L10 19 Z" fill="#60a0e0"/><path d="M12.5 21 H21.2 L19.8 23.3 H14.4 Z" fill="#7ebcf2"/></svg>
<div class="t" style="left:934px;top:102.10px;font-size:17px;color:#fff;">app_info_list.dart</div>
<svg style="left:1066px;top:105px;" width="12" height="12" viewBox="0 0 12 12"><path d="M1 1 L11 11 M11 1 L1 11" stroke="#fff" stroke-width="1.6"/></svg>
<svg style="left:1098px;top:99px;" width="24" height="25" viewBox="0 0 24 25"><path d="M2.6 8.3 H10.1 V0.2 H18.3 V22.4 H2.6 Z" fill="#fff"/><path d="M2.6 6.7 L8.7 0.3 V6.7 Z" fill="#fff"/><path d="M13 10.8 H18.6 L22.9 15 V20.6 L20 23.9 H14 L9.3 19.2 V14.4 Z" fill="#4a6aa2" stroke="#000" stroke-width="1.4"/><path d="M10 14.6 L12.9 11.6 L21.2 20 V23.3 H14.2 L10 19 Z" fill="#60a0e0"/><path d="M12.5 21 H21.2 L19.8 23.3 H14.4 Z" fill="#7ebcf2"/></svg>
<div class="t" style="left:1126px;top:102.10px;font-size:17px;color:#8ad2c8;">ticket_view.dart</div>
<svg style="left:1247px;top:105px;" width="12" height="12" viewBox="0 0 12 12"><path d="M1 1 L11 11 M11 1 L1 11" stroke="#fff" stroke-width="1.6"/></svg>
<div style="position:absolute;left:514px;top:88px;width:816px;height:42px;overflow:hidden;">
<svg style="left:766px;top:11px;" width="24" height="25" viewBox="0 0 24 25"><path d="M2.6 8.3 H10.1 V0.2 H18.3 V22.4 H2.6 Z" fill="#fff"/><path d="M2.6 6.7 L8.7 0.3 V6.7 Z" fill="#fff"/><path d="M13 10.8 H18.6 L22.9 15 V20.6 L20 23.9 H14 L9.3 19.2 V14.4 Z" fill="#4a6aa2" stroke="#000" stroke-width="1.4"/><path d="M10 14.6 L12.9 11.6 L21.2 20 V23.3 H14.2 L10 19 Z" fill="#60a0e0"/><path d="M12.5 21 H21.2 L19.8 23.3 H14.4 Z" fill="#7ebcf2"/></svg>
<div class="t" style="left:794px;top:14.10px;font-size:17px;color:#fff;">home_screen.dart</div>
</div>
<div style="position:absolute;left:1267px;top:126px;width:63px;height:4px;background:#14e4ff;"></div>
<div style="position:absolute;left:514px;top:131px;width:816px;height:525px;overflow:hidden;background:#131313;">
<div class="t" style="left:36px;top:-13.31px;font-size:25px;color:#a5a5a5;font-family:'Liberation Mono', monospace;letter-spacing:-1px;">7</div>
<div class="t" style="left:36px;top:28.07px;font-size:25px;color:#a5a5a5;font-family:'Liberation Mono', monospace;letter-spacing:-1px;">8</div>
<div class="t" style="left:36px;top:69.45px;font-size:25px;color:#a5a5a5;font-family:'Liberation Mono', monospace;letter-spacing:-1px;">9</div>
<div class="t" style="left:21px;top:110.83px;font-size:25px;color:#a5a5a5;font-family:'Liberation Mono', monospace;letter-spacing:-1px;">10</div>
<div class="t" style="left:21px;top:152.22px;font-size:25px;color:#a5a5a5;font-family:'Liberation Mono', monospace;letter-spacing:-1px;">11</div>
<div class="t" style="left:21px;top:193.60px;font-size:25px;color:#a5a5a5;font-family:'Liberation Mono', monospace;letter-spacing:-1px;">12</div>
<div class="t" style="left:21px;top:234.98px;font-size:25px;color:#a5a5a5;font-family:'Liberation Mono', monospace;letter-spacing:-1px;">13</div>
<div class="t" style="left:21px;top:276.36px;font-size:25px;color:#a5a5a5;font-family:'Liberation Mono', monospace;letter-spacing:-1px;">14</div>
<div class="t" style="left:21px;top:317.74px;font-size:25px;color:#a5a5a5;font-family:'Liberation Mono', monospace;letter-spacing:-1px;">15</div>
<div class="t" style="left:21px;top:359.12px;font-size:25px;color:#a5a5a5;font-family:'Liberation Mono', monospace;letter-spacing:-1px;">16</div>
<div class="t" style="left:21px;top:400.50px;font-size:25px;color:#a5a5a5;font-family:'Liberation Mono', monospace;letter-spacing:-1px;">17</div>
<div class="t" style="left:21px;top:441.88px;font-size:25px;color:#a5a5a5;font-family:'Liberation Mono', monospace;letter-spacing:-1px;">18</div>
<div class="t" style="left:21px;top:483.25px;font-size:25px;color:#a5a5a5;font-family:'Liberation Mono', monospace;letter-spacing:-1px;">19</div>
<div class="t" style="left:21px;top:524.63px;font-size:25px;color:#a5a5a5;font-family:'Liberation Mono', monospace;letter-spacing:-1px;">20</div>
<div class="t" style="left:129px;top:-13.31px;font-size:25px;color:#f0f0f0;font-family:'Liberation Mono', monospace;"><span style="color:#e9844f;">import </span><span style="color:#5ab845;">'../utils/app_info_list.dart'</span><span style="color:#e9844f;">;</span></div>
<div class="t" style="left:129px;top:28.07px;font-size:25px;color:#f0f0f0;font-family:'Liberation Mono', monospace;"><span style="color:#e9844f;">import </span><span style="color:#5ab845;">'../utils/app_styles.dart'</span><span style="color:#e9844f;">;</span></div>
<div class="t" style="left:129px;top:110.83px;font-size:25px;color:#f0f0f0;font-family:'Liberation Mono', monospace;"><span style="color:#e9844f;">class </span><span style="color:#f0f0f0;">HomeScreen </span><span style="color:#e9844f;">extends </span><span style="color:#f0f0f0;">StatelessWidget {</span></div>
<div class="t" style="left:129px;top:152.22px;font-size:25px;color:#f0f0f0;font-family:'Liberation Mono', monospace;"><span style="color:#e9844f;">  const </span><span style="color:#f0f0f0;">HomeScreen({Key? key}) : </span><span style="color:#e9844f;">super</span><span style="color:#f0f0f0;">(key: key);</span></div>
<div class="t" style="left:129px;top:234.98px;font-size:25px;color:#f0f0f0;font-family:'Liberation Mono', monospace;"><span style="color:#f0f0f0;">  </span><span style="color:#b3b83a;">@</span><span style="color:#f0f0f0;">override</span></div>
<div class="t" style="left:129px;top:276.36px;font-size:25px;color:#f0f0f0;font-family:'Liberation Mono', monospace;"><span style="color:#f0f0f0;">  Widget </span><span style="color:#f6c54b;">build</span><span style="color:#f0f0f0;">(BuildContext context) {</span></div>
<div class="t" style="left:129px;top:317.74px;font-size:25px;color:#f0f0f0;font-family:'Liberation Mono', monospace;"><span style="color:#f0f0f0;">    </span><span style="color:#e9844f;">return </span><span style="color:#f6c54b;">Scaffold</span><span style="color:#f0f0f0;">(</span></div>
<div class="t" style="left:129px;top:359.12px;font-size:25px;color:#f0f0f0;font-family:'Liberation Mono', monospace;"><span style="color:#f0f0f0;">      backgroundColor: Styles.</span><span style="color:#d98ae2;font-style:italic;">bgColor</span><span style="color:#e9844f;">,</span></div>
<div class="t" style="left:129px;top:400.50px;font-size:25px;color:#f0f0f0;font-family:'Liberation Mono', monospace;"><span style="color:#f0f0f0;">      body: </span><span style="color:#f6c54b;">ListView</span><span style="color:#f0f0f0;">(</span></div>
<div class="t" style="left:129px;top:441.88px;font-size:25px;color:#f0f0f0;font-family:'Liberation Mono', monospace;"><span style="color:#f0f0f0;">        children: [</span></div>
<div class="t" style="left:129px;top:483.25px;font-size:25px;color:#f0f0f0;font-family:'Liberation Mono', monospace;"><span style="color:#f0f0f0;">          </span><span style="color:#f6c54b;">Container</span><span style="color:#f0f0f0;">(</span></div>
<div style="position:absolute;left:116px;top:0px;width:1px;height:525px;background:#9a9a9a;"></div>
<svg style="left:107px;top:26.19999999999999px;" width="18" height="23" viewBox="0 0 18 23"><path d="M0.75 21.5 H17.25 V9 L9 0.75 L0.75 9 Z" fill="#131313" stroke="#9a9a9a" stroke-width="1.3"/><path d="M5 13.5 H13" stroke="#9a9a9a" stroke-width="1.3"/></svg>
<svg style="left:107px;top:111.95999999999998px;" width="18" height="23" viewBox="0 0 18 23"><path d="M0.75 0.75 H17.25 V13 L9 21.5 L0.75 13 Z" fill="#131313" stroke="#9a9a9a" stroke-width="1.3"/><path d="M5 8 H13" stroke="#9a9a9a" stroke-width="1.3"/></svg>
<svg style="left:107px;top:277.48px;" width="18" height="23" viewBox="0 0 18 23"><path d="M0.75 0.75 H17.25 V13 L9 21.5 L0.75 13 Z" fill="#131313" stroke="#9a9a9a" stroke-width="1.3"/><path d="M5 8 H13" stroke="#9a9a9a" stroke-width="1.3"/></svg>
<svg style="left:107px;top:318.86px;" width="18" height="23" viewBox="0 0 18 23"><path d="M0.75 0.75 H17.25 V13 L9 21.5 L0.75 13 Z" fill="#131313" stroke="#9a9a9a" stroke-width="1.3"/><path d="M5 8 H13" stroke="#9a9a9a" stroke-width="1.3"/></svg>
<svg style="left:107px;top:401.62px;" width="18" height="23" viewBox="0 0 18 23"><path d="M0.75 0.75 H17.25 V13 L9 21.5 L0.75 13 Z" fill="#131313" stroke="#9a9a9a" stroke-width="1.3"/><path d="M5 8 H13" stroke="#9a9a9a" stroke-width="1.3"/></svg>
<svg style="left:107px;top:484.38px;" width="18" height="23" viewBox="0 0 18 23"><path d="M0.75 0.75 H17.25 V13 L9 21.5 L0.75 13 Z" fill="#131313" stroke="#9a9a9a" stroke-width="1.3"/><path d="M5 8 H13" stroke="#9a9a9a" stroke-width="1.3"/></svg>
<div style="position:absolute;left:185px;top:348px;width:1px;height:161px;background:#5a5a5a;"></div>
<div style="position:absolute;left:185px;top:410px;width:27px;height:1px;background:#8a8a8a;"></div>
<div style="position:absolute;left:215px;top:430px;width:1px;height:79px;background:#8a8a8a;"></div>
<div style="position:absolute;left:215px;top:492px;width:56px;height:1px;background:#8a8a8a;"></div>
<svg style="left:60px;top:272px;" width="27" height="28" viewBox="0 0 27 28"><circle cx="8.5" cy="14" r="8.5" fill="#11e8f8"/><circle cx="8.5" cy="14" r="3.2" fill="none" stroke="#000" stroke-width="2"/><path d="M19.5 27 V7" stroke="#ff3838" stroke-width="3"/><path d="M15 8 L20.5 1 L26 8 Z" fill="#ff3838"/></svg>
<div style="position:absolute;left:129px;top:511px;width:687px;height:14px;background:#d6d7d1;"></div>
</div>
<div style="position:absolute;left:513px;top:656px;width:818px;height:2px;background:#000;"></div>
<div style="position:absolute;left:33px;top:658px;width:1297px;height:1px;background:#c8c8c8;"></div>
<div style="position:absolute;left:33px;top:659px;width:1297px;height:42px;background:#2a1b36;"></div>
<div style="position:absolute;left:409px;top:659px;width:1px;height:42px;background:#000;"></div>
<div style="position:absolute;left:784px;top:659px;width:1px;height:42px;background:#000;"></div>
<div style="position:absolute;left:1158px;top:659px;width:1px;height:42px;background:#000;"></div>
<div class="t" style="left:43px;top:671.30px;font-size:17px;color:#fff;">Run:</div>
<svg style="left:109px;top:667px;" width="22.0" height="25.0" viewBox="0 0 22.0 25.0"><g transform="scale(1.0)"><path d="M10.3 0 H18 L3 15 L0 11.8 Z" fill="#2f6f9a"/><path d="M10.3 12 H18 L8.6 21.3 L4.9 17.5 Z" fill="#2a6690"/><path d="M8.6 21.3 L12.3 17.6 L17.9 23.2 H10.5 Z" fill="#1d4d72"/></g></svg>
<div class="t" style="left:135px;top:671.30px;font-size:17px;color:#fff;">main.dart</div>
<svg style="left:209px;top:674px;" width="12.5" height="12.5" viewBox="0 0 12.5 12.5"><path d="M1 1 L11.5 11.5 M11.5 1 L1 11.5" stroke="#fff" stroke-width="1.6"/></svg>
<div style="position:absolute;left:87px;top:695px;width:152px;height:6px;background:#14e4ff;"></div>
<div style="position:absolute;left:79px;top:701px;width:1px;height:311px;background:#b8b8b8;"></div>
<div style="position:absolute;left:80px;top:744px;width:1250px;height:1px;background:#b8b8b8;"></div>
<div style="position:absolute;left:125px;top:745px;width:1px;height:267px;background:#b8b8b8;"></div>
<div style="position:absolute;left:48px;top:717px;width:16px;height:16px;background:#ff3030;"></div>
<svg style="left:45px;top:757px;" width="23" height="23" viewBox="0 0 23 23"><path d="M12 2 L21 11 L17 12 L13 16 L12 20 L3 11 L7 10 L11 6 Z" fill="#fff"/><path d="M8 15 L1 22" stroke="#fff" stroke-width="2"/></svg>
<svg style="left:101px;top:714px;" width="20" height="16" viewBox="0 0 20 16"><rect width="20" height="16" fill="#fff"/><path d="M6 4 L11 8 L6 12" fill="none" stroke="#000" stroke-width="2.2"/></svg>
<div class="t" style="left:129px;top:714.30px;font-size:17px;color:#fff;">Console</div>
<svg style="left:212px;top:711px;" width="15" height="23" viewBox="0 0 15 23"><path d="M9 0 L1 13 H6.5 L4.5 23 L14 9 H8.5 Z" fill="#f2b32a"/></svg>
<svg style="left:251px;top:712px;" width="23" height="22" viewBox="0 0 23 22"><path d="M5 13 V6 A3 3 0 0 1 8 3 H17 A3 3 0 0 1 20 6 V9" fill="none" stroke="#22aa33" stroke-width="2.6"/><path d="M1 11 L5 16 L9 11" fill="none" stroke="#22aa33" stroke-width="2.6"/><path d="M18 9 L13 16 H17 L15 22 L21 14 H17 Z" fill="#f2b32a"/></svg>
<div style="position:absolute;left:289px;top:708px;width:1px;height:28px;background:#d0d0d0;"></div>
<svg style="left:306px;top:711px;" width="23" height="23" viewBox="0 0 23 23"><path d="M6 0 H15 L22 7 V17 H16 V23 H9 L0 14 V6 Z" fill="#4a74b8"/><path d="M6 1 L21 16 H16 L2 5 Z" fill="#7fb3ea"/><path d="M0 14 L9 23 V17 H16" fill="#6b9ddc"/></svg>
<svg style="left:95px;top:760px;" width="16" height="21" viewBox="0 0 16 21"><path d="M8 21 V3 M1.5 9 L8 2 L14.5 9" fill="none" stroke="#fff" stroke-width="2.6"/></svg>
<svg style="left:95px;top:803px;" width="16" height="20" viewBox="0 0 16 20"><path d="M8 0 V17 M1.5 11 L8 18 L14.5 11" fill="none" stroke="#fff" stroke-width="2.6"/></svg>
<svg style="left:92px;top:845px;" width="22" height="23" viewBox="0 0 22 23"><path d="M0 2 H20 M0 9 H17 A4.5 4.5 0 0 1 17 18 H11" fill="none" stroke="#fff" stroke-width="2.6"/><path d="M0 18 H5" stroke="#fff" stroke-width="2.6"/><path d="M8 18 L13 14 V22 Z" fill="#fff"/></svg>
<div style="left:85px;top:880px;width:31px;height:31px;border:2px solid #14d4ee;border-radius:5px"></div>
<svg style="left:92px;top:886px;" width="20" height="20" viewBox="0 0 20 20"><path d="M0 4 H5 M0 9 H5 M0 16 H19" stroke="#fff" stroke-width="2.6"/><path d="M12 0 V11 M7.5 7 L12 12 L16.5 7" fill="none" stroke="#fff" stroke-width="2.6"/></svg>
<svg style="left:91px;top:930px;" width="23" height="22" viewBox="0 0 23 22"><rect x="5" y="0" width="13" height="5" fill="#fff"/><rect x="0" y="6" width="23" height="10" rx="2" fill="#fff"/><rect x="5" y="12" width="13" height="10" fill="#fff"/><rect x="7.5" y="14" width="8" height="6" fill="#000"/><circle cx="19" cy="9" r="1" fill="#000"/></svg>
<svg style="left:94px;top:969px;" width="17" height="23" viewBox="0 0 17 23"><rect x="0" y="3" width="17" height="3" fill="#fff"/><rect x="5" y="0" width="7" height="3" fill="#fff"/><path d="M1.5 7 H15.5 L14.5 23 H2.5 Z" fill="#fff"/></svg>
<div style="position:absolute;left:126px;top:745px;width:1204px;height:267px;overflow:hidden;background:#000;">
<div class="t" style="left:23px;top:10.08px;font-size:25px;color:#f0f0f0;font-family:'Liberation Mono', monospace;">Launching <span style="color:#3da2f5;text-decoration:underline;text-underline-offset:3px">lib\main.dart</span> on sdk gphone x86 in debug mode...</div>
<div class="t" style="left:23px;top:51.33px;font-size:25px;color:#f0f0f0;font-family:'Liberation Mono', monospace;">Running Gradle task 'assembleDebug'...</div>
<div class="t" style="left:23px;top:92.58px;font-size:25px;color:#f0f0f0;font-family:'Liberation Mono', monospace;">√  Built build\app\outputs\flutter-apk\app-debug.apk.</div>
<div class="t" style="left:23px;top:133.83px;font-size:25px;color:#f0f0f0;font-family:'Liberation Mono', monospace;">Installing build\app\outputs\flutter-apk\app.apk...</div>
<div class="t" style="left:23px;top:175.08px;font-size:25px;color:#f0f0f0;font-family:'Liberation Mono', monospace;">Debug service listening on ws://127.0.0.1:49631/CHj4ZZ65EOs=/ws</div>
<div class="t" style="left:23px;top:216.33px;font-size:25px;color:#f0f0f0;font-family:'Liberation Mono', monospace;">Syncing files to device sdk gphone x86...</div>
<div class="t" style="left:23px;top:257.58px;font-size:25px;color:#f0f0f0;font-family:'Liberation Mono', monospace;">I/flutter (18886): Hotel price is 25</div>
</div>
<div style="position:absolute;left:1331px;top:88px;width:556px;height:1px;background:#c8c8c8;"></div>
<div style="position:absolute;left:1331px;top:89px;width:556px;height:42px;background:#47006f;"></div>
<div class="t" style="left:1340px;top:101.31px;font-size:17px;color:#fff;">Emulator:</div>
<div style="position:absolute;left:1518px;top:89px;width:1px;height:37px;background:#000;"></div>
<svg style="left:1444px;top:99px;" width="20" height="23" viewBox="0 0 20 23"><path d="M7 20 H1.5 V1.5 H13 V8" fill="none" stroke="#fff" stroke-width="2.4" stroke-linejoin="round"/><rect x="9" y="10" width="10" height="8" fill="none" stroke="#bbb" stroke-width="1.3"/><path d="M11 21 H17" stroke="#bbb" stroke-width="1.2"/><circle cx="15.5" cy="18" r="3.2" fill="#11dd11"/></svg>
<div class="t" style="left:1468px;top:101.31px;font-size:17px;color:#fff;">Pixel 3a API 30</div>
<svg style="left:1587px;top:105px;" width="12" height="12" viewBox="0 0 12 12"><path d="M1 1 L11 11 M11 1 L1 11" stroke="#fff" stroke-width="1.6"/></svg>
<div style="position:absolute;left:1419px;top:125px;width:197px;height:6px;background:#14e4ff;"></div>
<svg style="left:1814px;top:100px;" width="20" height="20" viewBox="0 0 20 20"><g transform="scale(1.0)"><polygon points="7.59,3.00 7.92,0.22 12.08,0.22 12.41,3.00 14.85,4.42 17.43,3.31 19.51,6.91 17.26,8.59 17.26,11.41 19.51,13.09 17.43,16.69 14.85,15.58 12.41,17.00 12.08,19.78 7.92,19.78 7.59,17.00 5.15,15.58 2.57,16.69 0.49,13.09 2.74,11.41 2.74,8.59 0.49,6.91 2.57,3.31 5.15,4.42" fill="#fff" stroke="#fff" stroke-width="0.8" stroke-linejoin="round"/><circle cx="10" cy="10" r="3.3" fill="#47006f"/></g></svg>
<div style="position:absolute;left:1857px;top:110px;width:19px;height:4px;background:#fff;"></div>
<div style="position:absolute;left:1331px;top:131px;width:556px;height:45px;background:#000;"></div>
<div style="position:absolute;left:1331px;top:176px;width:556px;height:1px;background:#c8c8c8;"></div>
<svg style="left:1343px;top:144px;" width="20" height="19" viewBox="0 0 20 19"><path d="M5 4.5 A8 8 0 1 0 15 4.5" fill="none" stroke="#fff" stroke-width="2.6"/><path d="M10 0 V9" stroke="#fff" stroke-width="2.6"/></svg>
<svg style="left:1378px;top:144px;" width="21" height="19" viewBox="0 0 21 19"><path d="M0 5.8 H5 L11 0.3 V18.7 L5 13.2 H0 Z" fill="#fff"/><path d="M11.8 5.6 A3.9 3.9 0 0 1 11.8 13.4 Z" fill="#fff"/><path d="M12.6 2 A7.6 7.6 0 0 1 12.6 17" fill="none" stroke="#fff" stroke-width="1.6"/></svg>
<svg style="left:1414px;top:144px;" width="17" height="19" viewBox="0 0 17 19"><path d="M0 5.8 H5 L11.5 0.3 V18.7 L5 13.2 H0 Z" fill="#fff"/><path d="M12.2 5.4 A4.1 4.1 0 0 1 12.2 13.6 Z" fill="#fff"/></svg>
<svg style="left:1450px;top:144px;" width="23" height="19" viewBox="0 0 23 19"><rect x="1.6" y="1" width="10.6" height="17" rx="1.6" fill="none" stroke="#fff" stroke-width="2"/><path d="M16.2 2.8 A7.6 8 0 0 1 14.5 18" fill="none" stroke="#11dcf4" stroke-width="2.8"/><path d="M13.5 0.3 H22.5 L17.5 5.6 Z" fill="#11dcf4"/></svg>
<svg style="left:1492px;top:144px;" width="23" height="19" viewBox="0 0 23 19"><rect x="10.8" y="1" width="10.6" height="17" rx="1.6" fill="none" stroke="#fff" stroke-width="2"/><path d="M6.8 2.8 A7.6 8 0 0 0 8.5 18" fill="none" stroke="#11dcf4" stroke-width="2.8"/><path d="M9.5 0.3 H0.5 L5.5 5.6 Z" fill="#11dcf4"/></svg>
<svg style="left:1540px;top:147px;" width="13" height="14" viewBox="0 0 13 14"><path d="M13 0 V14 L0 7 Z" fill="#fff" stroke="#fff" stroke-linejoin="round" stroke-width="1"/></svg>
<svg style="left:1581px;top:146px;" width="14" height="14" viewBox="0 0 14 14"><circle cx="7" cy="7" r="6.8" fill="#fff"/></svg>
<div style="position:absolute;left:1625px;top:147px;width:13px;height:13px;background:#fff;border-radius:2px"></div>
<svg style="left:1662px;top:144px;" width="23" height="19" viewBox="0 0 23 19"><path d="M0 5 A2 2 0 0 1 2 3 H6 L8 0 H15 L17 3 H21 A2 2 0 0 1 23 5 V17 A2 2 0 0 1 21 19 H2 A2 2 0 0 1 0 17 Z" fill="#fff"/><circle cx="11.5" cy="11" r="4.6" fill="#000"/><circle cx="11.5" cy="11" r="2.2" fill="#fff"/></svg>
<svg style="left:1705px;top:142px;" width="23" height="23" viewBox="0 0 23 23"><path d="M3.2 7 A9.2 9.2 0 1 1 2.2 13" fill="none" stroke="#fff" stroke-width="2.6"/><path d="M0.3 0.3 L7.5 8.5 H0.3 Z" fill="#fff"/><path d="M12 12 V18 M12 12.2 H17" stroke="#fff" stroke-width="1.6"/></svg>
<svg style="left:1755px;top:144px;" width="7" height="20" viewBox="0 0 7 20"><circle cx="3.3" cy="2.8" r="2.6" fill="#fff"/><circle cx="3.3" cy="10" r="2.6" fill="#fff"/><circle cx="3.3" cy="17.2" r="2.6" fill="#fff"/></svg>
<div style="position:absolute;left:1331px;top:177px;width:556px;height:835px;overflow:hidden;background:#000;">
<div style="position:absolute;left:83px;top:1px;width:386px;height:833px;border-radius:54px 54px 60px 60px;box-sizing:border-box;border:3px solid #4a4a4a;background:#000"></div>
<div style="position:absolute;left:87px;top:5px;width:378px;height:825px;border-radius:50px 50px 56px 56px;box-sizing:border-box;border:1.5px solid #1c1c1c"></div>
<div style="position:absolute;left:92px;top:10px;width:368px;height:815px;border-radius:45px 45px 52px 52px;box-sizing:border-box;border:2.5px solid #6c6f75;border-top-color:#9a9ea5;border-bottom-color:#333;"></div>
<div style="position:absolute;left:468.5px;top:321px;width:3px;height:106px;background:#111;border:1px solid #555;border-left:none;box-sizing:border-box"></div>
<div style="position:absolute;left:468.5px;top:211px;width:3px;height:53px;background:#111;border:1px solid #444;border-left:none;box-sizing:border-box"></div>
<svg style="left:158px;top:28px;" width="14" height="14" viewBox="0 0 14 14"><circle cx="7" cy="7" r="6" fill="#1a1a1a"/><circle cx="7" cy="7" r="3.5" fill="#1f2540"/></svg>
<div style="position:absolute;left:236px;top:30px;width:81px;height:8px;background:#333;border-radius:4px;background:repeating-linear-gradient(90deg,#2e2e2e 0 2px,#181818 2px 4px)"></div>
<div style="position:absolute;left:105px;top:70px;width:340px;height:658px;overflow:hidden;background:#eeedf2;border-radius:10px 10px 0 0">
<div style="position:absolute;left:0px;top:0px;width:340px;height:21px;background:#b3b3b5;"></div>
<div class="t" style="left:7px;top:4.94px;font-size:12.5px;color:#fafafa;font-family:'Liberation Sans', sans-serif;">10:27</div>
<svg style="left:47px;top:4.5px;" width="11.5" height="11.5" viewBox="0 0 11.5 11.5"><g transform="scale(0.575)"><polygon points="7.59,3.00 7.92,0.22 12.08,0.22 12.41,3.00 14.85,4.42 17.43,3.31 19.51,6.91 17.26,8.59 17.26,11.41 19.51,13.09 17.43,16.69 14.85,15.58 12.41,17.00 12.08,19.78 7.92,19.78 7.59,17.00 5.15,15.58 2.57,16.69 0.49,13.09 2.74,11.41 2.74,8.59 0.49,6.91 2.57,3.31 5.15,4.42" fill="#f4f4f4" stroke="#f4f4f4" stroke-width="0.8" stroke-linejoin="round"/><circle cx="10" cy="10" r="3.3" fill="#b3b3b5"/></g></svg>
<svg style="left:68px;top:6px;" width="9" height="9" viewBox="0 0 9 9"><rect width="9" height="9" fill="#f4f4f4"/><path d="M2.3 7.5 L4.5 1.8 L6.7 7.5 M3.2 5.5 H5.8" fill="none" stroke="#b3b3b5" stroke-width="0.9"/></svg>
<svg style="left:85px;top:3px;" width="10" height="13" viewBox="0 0 10 13"><circle cx="5" cy="2" r="1.6" fill="none" stroke="#f4f4f4" stroke-width="1.2"/><path d="M1 6 L5 11 L9 6 M1 6 H9" fill="none" stroke="#f4f4f4" stroke-width="1.2"/></svg>
<svg style="left:295px;top:5px;" width="40" height="11" viewBox="0 0 40 11"><path d="M0 2 A9 9 0 0 1 13 2 L6.5 10 Z" fill="#f8f8f8"/><path d="M15 10 L25 0 V10 Z" fill="#f8f8f8"/><rect x="31" y="0" width="7" height="11" rx="1" fill="#f8f8f8"/></svg>
<div class="t" style="left:18px;top:56.97px;font-size:14px;color:#1e1e1e;font-family:'Liberation Sans', sans-serif;letter-spacing:0.1px;">Travel Safe</div>
<div class="t" style="left:18px;top:80.39px;font-size:21.2px;color:#3a3a3a;font-family:'Liberation Sans', sans-serif;font-weight:bold;">Book Tickets</div>
<svg style="left:280px;top:58px;" width="42" height="42" viewBox="0 0 42 42"><circle cx="21" cy="21" r="21" fill="#2f2e82"/><g transform="translate(21,21) rotate(45) translate(-21,-21)"><path d="M21 8 C22.5 8 23 9.5 23 11 V17 L32 22 V25 L23 22 V28 L26 30 V32 L21 30.5 L16 32 V30 L19 28 V22 L10 25 V22 L19 17 V11 C19 9.5 19.5 8 21 8 Z" fill="#fff"/></g></svg>
<div style="position:absolute;left:17px;top:125px;width:306px;height:41px;background:#f1f4fc;border-radius:9px"></div>
<svg style="left:30px;top:137px;" width="17" height="17" viewBox="0 0 17 17"><circle cx="7" cy="7" r="5.8" fill="none" stroke="#c5c500" stroke-width="1.8"/><path d="M11 11 L16 16" stroke="#c5c500" stroke-width="1.8"/></svg>
<div class="t" style="left:49px;top:139.82px;font-size:12.4px;color:#9c9c9c;font-family:'Liberation Sans', sans-serif;">Search</div>
<div class="t" style="left:17px;top:203.38px;font-size:17.3px;color:#3a3a3a;font-family:'Liberation Sans', sans-serif;font-weight:bold;">Upcoming Flights</div>
<div class="t" style="left:274.5px;top:206.17px;font-size:14px;color:#566ba5;font-family:'Liberation Sans', sans-serif;">View all</div>
<div style="position:absolute;left:17px;top:236px;width:279px;height:69px;background:#52679b;border-radius:18px 18px 0 0"></div>
<div style="position:absolute;left:17px;top:304px;width:279px;height:76px;background:#f47b68;border-radius:0 0 18px 18px"></div>
<div style="position:absolute;left:8px;top:304px;width:18px;height:18px;background:#eeedf2;border-radius:50%"></div>
<div style="position:absolute;left:287px;top:304px;width:18px;height:18px;background:#eeedf2;border-radius:50%"></div>
<div style="position:absolute;left:30.0px;top:312px;width:5.5px;height:2px;background:#f7b8ac;"></div>
<div style="position:absolute;left:43.59999999999991px;top:312px;width:5.5px;height:2px;background:#f7b8ac;"></div>
<div style="position:absolute;left:57.200000000000045px;top:312px;width:5.5px;height:2px;background:#f7b8ac;"></div>
<div style="position:absolute;left:70.79999999999995px;top:312px;width:5.5px;height:2px;background:#f7b8ac;"></div>
<div style="position:absolute;left:84.40000000000009px;top:312px;width:5.5px;height:2px;background:#f7b8ac;"></div>
<div style="position:absolute;left:98.0px;top:312px;width:5.5px;height:2px;background:#f7b8ac;"></div>
<div style="position:absolute;left:111.59999999999991px;top:312px;width:5.5px;height:2px;background:#f7b8ac;"></div>
<div style="position:absolute;left:125.20000000000005px;top:312px;width:5.5px;height:2px;background:#f7b8ac;"></div>
<div style="position:absolute;left:138.79999999999995px;top:312px;width:5.5px;height:2px;background:#f7b8ac;"></div>
<div style="position:absolute;left:152.4000000000001px;top:312px;width:5.5px;height:2px;background:#f7b8ac;"></div>
<div style="position:absolute;left:166.0px;top:312px;width:5.5px;height:2px;background:#f7b8ac;"></div>
<div style="position:absolute;left:179.5999999999999px;top:312px;width:5.5px;height:2px;background:#f7b8ac;"></div>
<div style="position:absolute;left:193.20000000000005px;top:312px;width:5.5px;height:2px;background:#f7b8ac;"></div>
<div style="position:absolute;left:206.79999999999995px;top:312px;width:5.5px;height:2px;background:#f7b8ac;"></div>
<div style="position:absolute;left:220.4000000000001px;top:312px;width:5.5px;height:2px;background:#f7b8ac;"></div>
<div style="position:absolute;left:234.0px;top:312px;width:5.5px;height:2px;background:#f7b8ac;"></div>
<div style="position:absolute;left:247.5999999999999px;top:312px;width:5.5px;height:2px;background:#f7b8ac;"></div>
<div style="position:absolute;left:261.20000000000005px;top:312px;width:5.5px;height:2px;background:#f7b8ac;"></div>
<div style="position:absolute;left:274.79999999999995px;top:312px;width:5.5px;height:2px;background:#f7b8ac;"></div>
<div style="position:absolute;left:310px;top:236px;width:279px;height:69px;background:#52679b;border-radius:18px 18px 0 0"></div>
<div style="position:absolute;left:310px;top:304px;width:279px;height:76px;background:#f47b68;border-radius:0 0 18px 18px"></div>
<div style="position:absolute;left:301px;top:304px;width:18px;height:18px;background:#eeedf2;border-radius:50%"></div>
<div style="position:absolute;left:580px;top:304px;width:18px;height:18px;background:#eeedf2;border-radius:50%"></div>
<div style="position:absolute;left:323.0px;top:312px;width:5.5px;height:2px;background:#f7b8ac;"></div>
<div style="position:absolute;left:336.5999999999999px;top:312px;width:5.5px;height:2px;background:#f7b8ac;"></div>
<div style="position:absolute;left:350.20000000000005px;top:312px;width:5.5px;height:2px;background:#f7b8ac;"></div>
<div style="position:absolute;left:363.79999999999995px;top:312px;width:5.5px;height:2px;background:#f7b8ac;"></div>
<div style="position:absolute;left:377.4000000000001px;top:312px;width:5.5px;height:2px;background:#f7b8ac;"></div>
<div style="position:absolute;left:391.0px;top:312px;width:5.5px;height:2px;background:#f7b8ac;"></div>
<div style="position:absolute;left:404.5999999999999px;top:312px;width:5.5px;height:2px;background:#f7b8ac;"></div>
<div style="position:absolute;left:418.20000000000005px;top:312px;width:5.5px;height:2px;background:#f7b8ac;"></div>
<div style="position:absolute;left:431.79999999999995px;top:312px;width:5.5px;height:2px;background:#f7b8ac;"></div>
<div style="position:absolute;left:445.4000000000001px;top:312px;width:5.5px;height:2px;background:#f7b8ac;"></div>
<div style="position:absolute;left:459.0px;top:312px;width:5.5px;height:2px;background:#f7b8ac;"></div>
<div style="position:absolute;left:472.5999999999999px;top:312px;width:5.5px;height:2px;background:#f7b8ac;"></div>
<div style="position:absolute;left:486.20000000000005px;top:312px;width:5.5px;height:2px;background:#f7b8ac;"></div>
<div style="position:absolute;left:499.79999999999995px;top:312px;width:5.5px;height:2px;background:#f7b8ac;"></div>
<div style="position:absolute;left:513.4000000000001px;top:312px;width:5.5px;height:2px;background:#f7b8ac;"></div>
<div style="position:absolute;left:527.0px;top:312px;width:5.5px;height:2px;background:#f7b8ac;"></div>
<div style="position:absolute;left:540.5999999999999px;top:312px;width:5.5px;height:2px;background:#f7b8ac;"></div>
<div style="position:absolute;left:554.2px;top:312px;width:5.5px;height:2px;background:#f7b8ac;"></div>
<div style="position:absolute;left:567.8px;top:312px;width:5.5px;height:2px;background:#f7b8ac;"></div>
<div class="t" style="left:32px;top:253.47px;font-size:14px;color:#fff;font-family:'Liberation Sans', sans-serif;-webkit-text-stroke:0.45px #fff;">NYC</div>
<div class="t" style="left:32px;top:276.37px;font-size:11.4px;color:#fff;font-family:'Liberation Sans', sans-serif;font-weight:bold;">New-York</div>
<svg style="left:118px;top:252px;" width="78" height="17" viewBox="0 0 78 17"><circle cx="5" cy="8" r="3.6" fill="none" stroke="#7bc3f3" stroke-width="2"/><circle cx="72.5" cy="8" r="3.6" fill="none" stroke="#7bc3f3" stroke-width="2"/><path d="M10 8 H28 M50 8 H68" stroke="#dfe6f2" stroke-width="1.3" stroke-dasharray="3 3"/><g transform="translate(39,8) rotate(90)"><path d="M0 -9 C1 -9 1.5 -8 1.5 -7 V-3 L8 1 V3 L1.5 1 V5 L3.5 6.5 V8 L0 7 L-3.5 8 V6.5 L-1.5 5 V1 L-8 3 V1 L-1.5 -3 V-7 C-1.5 -8 -1 -9 0 -9 Z" fill="#fff"/></g></svg>
<div class="t" style="left:156px;top:275.59px;font-size:13.5px;color:#fff;font-family:'Liberation Sans', sans-serif;transform:translateX(-50%);">8H 30M</div>
<div class="t" style="left:281px;top:253.47px;font-size:14px;color:#fff;font-family:'Liberation Sans', sans-serif;transform:translateX(-100%);-webkit-text-stroke:0.45px #fff;">LDN</div>
<div class="t" style="left:281px;top:276.20px;font-size:11.6px;color:#fff;font-family:'Liberation Sans', sans-serif;transform:translateX(-100%);-webkit-text-stroke:0.3px #fff;">LONDON</div>
<div class="t" style="left:32px;top:332.59px;font-size:13.5px;color:#1a1a1a;font-family:'Liberation Sans', sans-serif;-webkit-text-stroke:0.4px #1a1a1a;">1 MAY</div>
<div class="t" style="left:32px;top:352.86px;font-size:12px;color:#a39a98;font-family:'Liberation Sans', sans-serif;font-weight:bold;">Date</div>
<div class="t" style="left:156px;top:332.59px;font-size:13.5px;color:#1a1a1a;font-family:'Liberation Sans', sans-serif;transform:translateX(-50%);-webkit-text-stroke:0.4px #1a1a1a;">08:00 AM</div>
<div class="t" style="left:155.5px;top:353.20px;font-size:11.6px;color:#a39a98;font-family:'Liberation Sans', sans-serif;font-weight:bold;transform:translateX(-50%);">Departure time</div>
<div class="t" style="left:281px;top:333.01px;font-size:13px;color:#fff;font-family:'Liberation Sans', sans-serif;transform:translateX(-100%);">23</div>
<div class="t" style="left:281px;top:352.28px;font-size:11.5px;color:#fff;font-family:'Liberation Sans', sans-serif;font-weight:bold;transform:translateX(-100%);">Number</div>
<div class="t" style="left:324px;top:253.47px;font-size:14px;color:#fff;font-family:'Liberation Sans', sans-serif;-webkit-text-stroke:0.45px #fff;">DKK</div>
<div class="t" style="left:324px;top:276.37px;font-size:11.4px;color:#fff;font-family:'Liberation Sans', sans-serif;font-weight:bold;">Dhaka</div>
<div class="t" style="left:324px;top:332.59px;font-size:13.5px;color:#1a1a1a;font-family:'Liberation Sans', sans-serif;-webkit-text-stroke:0.4px #1a1a1a;">10 MAY</div>
<div class="t" style="left:324px;top:352.86px;font-size:12px;color:#a39a98;font-family:'Liberation Sans', sans-serif;font-weight:bold;">Date</div>
<div class="t" style="left:17.5px;top:394.68px;font-size:17.3px;color:#3a3a3a;font-family:'Liberation Sans', sans-serif;font-weight:bold;">Hotels</div>
<div class="t" style="left:274.5px;top:397.47px;font-size:14px;color:#566ba5;font-family:'Liberation Sans', sans-serif;">View all</div>
<div style="position:absolute;left:17px;top:432px;width:204px;height:240px;background:#6b7db1;border-radius:18px"></div>
<svg style="left:30px;top:447px;filter:blur(0.5px)" width="178" height="156" viewBox="0 0 178 156"><defs><linearGradient id="sky1" x1="0" y1="0" x2="1" y2="0.2"><stop offset="0" stop-color="#a8cdf0"/><stop offset="0.6" stop-color="#78b2ea"/><stop offset="1" stop-color="#3a8ee4"/></linearGradient><linearGradient id="deck1" x1="0" y1="0" x2="0.2" y2="1"><stop offset="0" stop-color="#c99a5e"/><stop offset="1" stop-color="#f0bc78"/></linearGradient><linearGradient id="pool1" x1="0" y1="0" x2="0" y2="1"><stop offset="0" stop-color="#3a78e8"/><stop offset="1" stop-color="#1c44b4"/></linearGradient><clipPath id="hc1"><rect width="178" height="156" rx="12"/></clipPath></defs><g clip-path="url(#hc1)"><rect width="178" height="156" fill="url(#sky1)"/><ellipse cx="22" cy="20" rx="30" ry="14" fill="#f4f8fc" opacity="0.85"/><ellipse cx="60" cy="30" rx="30" ry="12" fill="#eef4fb" opacity="0.8"/><ellipse cx="30" cy="50" rx="38" ry="12" fill="#f2f6fa" opacity="0.85"/><ellipse cx="95" cy="12" rx="22" ry="8" fill="#f4f8fc" opacity="0.7"/><ellipse cx="75" cy="52" rx="16" ry="7" fill="#f4f8fc" opacity="0.7"/><ellipse cx="118" cy="6" rx="14" ry="5" fill="#f4f8fc" opacity="0.55"/><path d="M0 68 L14 64 L36 62 L52 64 L68 65 V76 H0 Z" fill="#7e8a86"/><path d="M0 72 Q12 68 24 72 Q40 67 56 72 Q76 68 96 72 V82 H0 Z" fill="#2e6e2a"/><path d="M0 84 L88 80 V83 L0 91 Z" fill="#86d040"/><path d="M0 90.5 L88 82 L86.6 84.5 L0 99 Z" fill="#2f7a22"/><path d="M0 98 L86.6 84.2 L85 87 L0 106 Z" fill="#c4a83a"/><path d="M68 42 L100 44 L155 0 H178 V82 H68 Z" fill="#eceef2"/><path d="M70 46.0 H100" stroke="#8a909c" stroke-width="1.2"/><path d="M70 51.5 H100" stroke="#8a909c" stroke-width="1.2"/><path d="M70 57.0 H100" stroke="#8a909c" stroke-width="1.2"/><path d="M70 62.5 H100" stroke="#8a909c" stroke-width="1.2"/><path d="M70 68.0 H100" stroke="#8a909c" stroke-width="1.2"/><path d="M70 73.5 H100" stroke="#8a909c" stroke-width="1.2"/><path d="M100 50.0 L176 8.0" stroke="#6c7280" stroke-width="1.6"/><path d="M100 54.6 L176 18.5" stroke="#6c7280" stroke-width="1.6"/><path d="M100 59.2 L176 29.0" stroke="#6c7280" stroke-width="1.6"/><path d="M100 63.8 L176 39.5" stroke="#6c7280" stroke-width="1.6"/><path d="M100 68.4 L176 50.0" stroke="#6c7280" stroke-width="1.6"/><path d="M100 73.0 L176 60.5" stroke="#6c7280" stroke-width="1.6"/><path d="M100 77.6 L176 71.0" stroke="#6c7280" stroke-width="1.6"/><path d="M104.0 44.8 V80" stroke="#fafafa" stroke-width="2.2"/><path d="M112.5 40.0 V80" stroke="#fafafa" stroke-width="2.2"/><path d="M121.0 35.2 V80" stroke="#fafafa" stroke-width="2.2"/><path d="M129.5 30.5 V80" stroke="#fafafa" stroke-width="2.2"/><path d="M138.0 25.7 V80" stroke="#fafafa" stroke-width="2.2"/><path d="M146.5 21.0 V80" stroke="#fafafa" stroke-width="2.2"/><path d="M155.0 16.2 V80" stroke="#fafafa" stroke-width="2.2"/><path d="M163.5 11.4 V80" stroke="#fafafa" stroke-width="2.2"/><path d="M172.0 6.7 V80" stroke="#fafafa" stroke-width="2.2"/><path d="M150 0 Q160 12 178 4 V50 Q170 36 164 44 Q158 24 146 30 Q156 16 150 0 Z" fill="#3d7a2c"/><path d="M0 106 L88 83 L108.6 81 L93 124 L78 152 H66 L0 135 Z" fill="url(#pool1)"/><path d="M50 140 L72 118 L80 120 L70 148 Z" fill="#1a3aa0" opacity="0.9"/><path d="M48 132 L78 112 M52 138 L80 118 M56 144 L82 124" stroke="#c8d8f8" stroke-width="1"/><path d="M0 135 L66 152 H78 L93 124 L108.6 81 H113 L92 156 H0 Z" fill="#b0b4b4"/><path d="M113 81 H178 V156 H92 Z" fill="url(#deck1)"/><path d="M112 58 L140 52 L178 55 V65 L112 67 Z" fill="#efe0c0"/><path d="M114 70 L136 66 L156 70 V74 L114 74 Z" fill="#e6d6b4"/><path d="M138 64 V92" stroke="#5a4a30" stroke-width="1.5"/><path d="M160 70 H178 V96 H160 Z" fill="#2a2a2a" opacity="0.75"/><path d="M110 98 L142 90 L156 102 L112 108 Z" fill="#e4dccc"/><path d="M140 86 L150 80 L154 90 L144 96 Z" fill="#f26a1a"/><path d="M126 84 L134 80 L137 86 L129 90 Z" fill="#f26a1a"/><path d="M118 82 L125 79 L127 84 L120 86 Z" fill="#f26a1a"/><path d="M2 108 V152 M12 114 V156 M2 108 Q18 102 30 110 V150 M12 114 Q22 108 30 114" stroke="#c4c4c4" stroke-width="2" fill="none"/><path d="M92 96 Q96 90 100 94 V122 M92 96 V120" stroke="#c4c4c4" stroke-width="1.6" fill="none"/></g></svg>
<div style="position:absolute;left:236px;top:432px;width:204px;height:240px;background:#6b7db1;border-radius:18px"></div>
<svg style="left:249px;top:447px;filter:blur(0.5px)" width="120" height="156" viewBox="0 0 120 156"><defs><linearGradient id="sky2" x1="0" y1="0" x2="0" y2="1"><stop offset="0" stop-color="#7aaede"/><stop offset="1" stop-color="#bcd4e8"/></linearGradient><linearGradient id="pool2" x1="0" y1="0" x2="0" y2="1"><stop offset="0" stop-color="#4aa4dc"/><stop offset="1" stop-color="#2a88c4"/></linearGradient><clipPath id="hc2"><rect width="120" height="156" rx="12"/></clipPath></defs><g clip-path="url(#hc2)"><rect width="120" height="156" fill="url(#sky2)"/><path d="M0 42 L8 44 L16 52 V70 H0 Z" fill="#b4a48c"/><path d="M10 29 L78 0 H91 V95 H12 Z" fill="#d8d8d4"/><path d="M75 6 H91 V92 H75 Z" fill="#ececE6"/><path d="M8 30 L78 1 H91" fill="none" stroke="#3a3a40" stroke-width="1.6"/><path d="M14 34.0 H74" stroke="#8a94a2" stroke-width="2.6"/><path d="M14 41.5 H74" stroke="#8a94a2" stroke-width="2.6"/><path d="M14 49.0 H74" stroke="#8a94a2" stroke-width="2.6"/><path d="M14 56.5 H74" stroke="#8a94a2" stroke-width="2.6"/><path d="M14 64.0 H74" stroke="#8a94a2" stroke-width="2.6"/><path d="M14 71.5 H74" stroke="#8a94a2" stroke-width="2.6"/><path d="M14 79.0 H74" stroke="#8a94a2" stroke-width="2.6"/><path d="M18.0 30.0 V92" stroke="#d2d4d2" stroke-width="2"/><path d="M25.5 26.8 V92" stroke="#d2d4d2" stroke-width="2"/><path d="M33.0 23.6 V92" stroke="#d2d4d2" stroke-width="2"/><path d="M40.5 20.4 V92" stroke="#d2d4d2" stroke-width="2"/><path d="M48.0 17.2 V92" stroke="#d2d4d2" stroke-width="2"/><path d="M55.5 14.0 V92" stroke="#d2d4d2" stroke-width="2"/><path d="M63.0 10.8 V92" stroke="#d2d4d2" stroke-width="2"/><path d="M70.5 7.6 V92" stroke="#d2d4d2" stroke-width="2"/><path d="M0 64 Q8 56 16 66 Q26 58 38 70 Q50 52 64 64 Q74 56 86 66 L91 62 V100 H0 Z" fill="#33602c"/><path d="M50 78 H91 V98 H50 Z" fill="#566070"/><path d="M10 82 L12 90 H8 Z M30 80 L33 90 H27 Z M46 82 L48 90 H44 Z M62 81 L65 91 H59 Z M80 81 L83 91 H77 Z" fill="#f4f4f4"/><path d="M0 90 H91 V98 H0 Z" fill="#8a7260"/><path d="M0 96 H91 V142 Q50 136 0 124 Z" fill="url(#pool2)"/><path d="M10 100 V112 M30 100 V114 M46 100 V112 M62 100 V114" stroke="#e8f0f4" stroke-width="2" opacity="0.7"/><path d="M0 124 Q50 136 91 142 V156 H0 Z" fill="#a2a2a0"/><path d="M0 124 Q50 136 91 142" fill="none" stroke="#e0e0dc" stroke-width="2"/></g></svg>
<div style="position:absolute;left:0px;top:610px;width:340px;height:48px;background:#f8f9fb;"></div>
<svg style="left:34px;top:623px;" width="17" height="18" viewBox="0 0 17 18"><path d="M8.5 0 L17 7 V18 H11 V12 H6 V18 H0 V7 Z" fill="#5d7587" stroke="#5d7587" stroke-linejoin="round"/></svg>
<svg style="left:119px;top:624px;" width="17" height="17" viewBox="0 0 17 17"><circle cx="7" cy="7" r="5.6" fill="none" stroke="#4e6678" stroke-width="1.6"/><path d="M11 11 L16 16" stroke="#4e6678" stroke-width="1.6"/></svg>
<svg style="left:203px;top:625px;" width="19" height="14" viewBox="0 0 19 14"><path d="M1 1 H18 V4.5 A2.5 2.5 0 0 0 18 9.5 V13 H1 V9.5 A2.5 2.5 0 0 0 1 4.5 Z" fill="none" stroke="#4e6678" stroke-width="1.6"/></svg>
<svg style="left:290px;top:623px;" width="15" height="19" viewBox="0 0 15 19"><circle cx="7.5" cy="4.5" r="3.6" fill="none" stroke="#4e6678" stroke-width="1.6"/><path d="M1 13 H14 A3 3 0 0 1 14 18 H1 A3 3 0 0 1 1 13 Z" fill="none" stroke="#4e6678" stroke-width="1.6"/></svg>
</div>
<svg style="left:170px;top:742px;" width="13" height="14" viewBox="0 0 13 14"><path d="M13 0 V14 L0 7 Z" fill="#9a9a9a"/></svg>
<svg style="left:269px;top:743px;" width="13" height="13" viewBox="0 0 13 13"><circle cx="6.5" cy="6.5" r="6.3" fill="#9a9a9a"/></svg>
<div style="position:absolute;left:366px;top:743px;width:13px;height:13px;background:#9a9a9a;border-radius:1px"></div>
<div style="position:absolute;left:488px;top:628px;width:42px;height:174px;border:1px solid #4a4a4a;border-radius:5px;box-sizing:border-box"></div>
<svg style="left:501px;top:644px;" width="16" height="16" viewBox="0 0 16 16"><path d="M8 0 V16 M0 8 H16" stroke="#fff" stroke-width="2.6"/></svg>
<div style="position:absolute;left:501px;top:693px;width:16px;height:2.5px;background:#555;"></div>
<svg style="left:499.5px;top:730px;" width="20" height="13" viewBox="0 0 20 13"><rect x="2.8" y="0" width="3.2" height="12.8" fill="#fff"/><rect x="0.2" y="1.2" width="3" height="3" fill="#fff"/><rect x="9.2" y="3.6" width="3" height="2.8" fill="#fff"/><rect x="9.2" y="9.6" width="3" height="2.8" fill="#fff"/><rect x="16" y="0" width="3.2" height="12.8" fill="#fff"/><rect x="13.4" y="1.2" width="3" height="3" fill="#fff"/></svg>
<svg style="left:499px;top:770px;" width="20" height="19" viewBox="0 0 20 19"><rect x="1" y="1" width="18" height="17" fill="none" stroke="#555" stroke-width="2"/><path d="M5 9 V5 H9 M15 10 V14 H11" fill="none" stroke="#555" stroke-width="1.6"/></svg>
</div>
<div style="position:absolute;left:1887px;top:88px;width:33px;height:117px;background:#3631fb;"></div>
<div style="position:absolute;left:1887px;top:88px;width:1px;height:924px;background:#a8a8a8;"></div>
<svg style="left:1897px;top:102px;" width="17" height="21" viewBox="0 0 17 21"><path d="M4.5 17.5 H1.5 V1.5 H11 V9" fill="none" stroke="#fff" stroke-width="2.4" stroke-linejoin="round"/><rect x="7.5" y="11.5" width="8" height="6" fill="none" stroke="#ddd" stroke-width="1.5"/><path d="M7 20 H13" stroke="#ddd" stroke-width="1"/><circle cx="13.8" cy="17.2" r="3" fill="#11dd11"/></svg>
<div class="t" style="left:1869.19px;top:151.50px;width:66px;font-size:17px;color:#fff;transform:rotate(90deg);text-align:center;letter-spacing:0.35px;">Emulator</div>
<svg style="left:1896px;top:223px;" width="20.46" height="23.25" viewBox="0 0 20.46 23.25"><g transform="scale(0.93)"><path d="M10.3 0 H18 L3 15 L0 11.8 Z" fill="#47c6fa"/><path d="M10.3 12 H18 L8.6 21.3 L4.9 17.5 Z" fill="#3dbbf3"/><path d="M8.6 21.3 L12.3 17.6 L17.9 23.2 H10.5 Z" fill="#0b62ab"/></g></svg>
<div class="t" style="left:1850.69px;top:293.00px;width:103px;font-size:17px;color:#fff;transform:rotate(90deg);text-align:center;letter-spacing:0.35px;">Flutter Outline</div>
<svg style="left:1896px;top:386px;" width="20.46" height="23.25" viewBox="0 0 20.46 23.25"><g transform="scale(0.93)"><path d="M10.3 0 H18 L3 15 L0 11.8 Z" fill="#47c6fa"/><path d="M10.3 12 H18 L8.6 21.3 L4.9 17.5 Z" fill="#3dbbf3"/><path d="M8.6 21.3 L12.3 17.6 L17.9 23.2 H10.5 Z" fill="#0b62ab"/><circle cx="18" cy="21.2" r="3.1" fill="#11dd11"/></g></svg>
<div class="t" style="left:1832.19px;top:474.50px;width:140px;font-size:17px;color:#fff;transform:rotate(90deg);text-align:center;letter-spacing:0.35px;">Flutter Performance</div>
<svg style="left:1895px;top:589px;" width="18" height="20" viewBox="0 0 18 20"><path d="M4 17.5 H1.3 V1.3 H13.5 V4" fill="none" stroke="#fff" stroke-width="2.4" stroke-linejoin="round"/><rect x="7.3" y="6.3" width="9.6" height="12.6" rx="1.5" fill="none" stroke="#fff" stroke-width="2.4"/><rect x="7.3" y="14" width="9.6" height="5" fill="#fff"/><circle cx="12" cy="16.5" r="0.9" fill="#000"/></svg>
<div class="t" style="left:1843.19px;top:663.50px;width:118px;font-size:17px;color:#fff;transform:rotate(90deg);text-align:center;letter-spacing:0.35px;">Device Manager</div>
<svg style="left:1896px;top:761px;" width="20.46" height="23.25" viewBox="0 0 20.46 23.25"><g transform="scale(0.93)"><path d="M10.3 0 H18 L3 15 L0 11.8 Z" fill="#47c6fa"/><path d="M10.3 12 H18 L8.6 21.3 L4.9 17.5 Z" fill="#3dbbf3"/><path d="M8.6 21.3 L12.3 17.6 L17.9 23.2 H10.5 Z" fill="#0b62ab"/><circle cx="18" cy="21.2" r="3.1" fill="#11dd11"/></g></svg>
<div class="t" style="left:1841.69px;top:836.00px;width:121px;font-size:17px;color:#fff;transform:rotate(90deg);text-align:center;letter-spacing:0.35px;">Flutter Inspector</div>
<svg style="left:1896px;top:936px;" width="17" height="20" viewBox="0 0 17 20"><rect x="1.2" y="1.2" width="14.6" height="17.6" rx="1.5" fill="none" stroke="#fff" stroke-width="2.2"/><path d="M6 15 H11" stroke="#fff" stroke-width="1.6"/></svg>
<div class="t" style="left:1880.19px;top:973.50px;width:44px;font-size:17px;color:#fff;transform:rotate(90deg);text-align:center;letter-spacing:0.35px;">Device</div>
<div style="position:absolute;left:0px;top:1012px;width:1920px;height:1px;background:#c8c8c8;"></div>
<div style="position:absolute;left:107px;top:1013px;width:80px;height:32px;background:#3631fb;"></div>
<svg style="left:49px;top:1021px;" width="14" height="18" viewBox="0 0 14 18"><circle cx="3" cy="3" r="2.4" fill="#fff"/><circle cx="11" cy="3" r="2.4" fill="#fff"/><circle cx="3" cy="15" r="2.4" fill="#fff"/><path d="M3 3 V15 M11 3 C11 9 3 8 3 13" fill="none" stroke="#fff" stroke-width="2.2"/></svg>
<div class="t" style="left:71.5px;top:1021.80px;font-size:17px;color:#fff;">Git</div>
<svg style="left:123px;top:1021px;" width="14" height="17" viewBox="0 0 14 17"><path d="M0 0 L13.5 8.5 L0 17 Z" fill="#fff"/></svg>
<div class="t" style="left:145px;top:1021.80px;font-size:17px;color:#fff;">Run</div>
<svg style="left:204px;top:1022px;" width="17" height="15" viewBox="0 0 17 15"><path d="M0 1.5 H3 M0 7.5 H3 M0 13.5 H3 M5 1.5 H17 M5 7.5 H17 M5 13.5 H17" stroke="#fff" stroke-width="2.8"/></svg>
<div class="t" style="left:227px;top:1021.80px;font-size:17px;color:#fff;">TODO</div>
<svg style="left:304px;top:1020px;" width="17" height="17" viewBox="0 0 17 17"><circle cx="8.5" cy="8.5" r="8.5" fill="#fff"/><path d="M8.5 3.5 V9.5" stroke="#000" stroke-width="2.6"/><circle cx="8.5" cy="13" r="1.5" fill="#000"/></svg>
<div class="t" style="left:327.5px;top:1021.80px;font-size:17px;color:#fff;">Problems</div>
<svg style="left:426px;top:1020px;" width="18" height="18" viewBox="0 0 18 18"><path d="M5 0 H12 L18 6 V13 L13 18 H6 L0 12 V5 Z" fill="#fff"/><path d="M4 3 L15 14" stroke="#000" stroke-width="2"/></svg>
<div class="t" style="left:450px;top:1021.80px;font-size:17px;color:#fff;">Dart Analysis</div>
<svg style="left:577px;top:1021px;" width="18" height="16" viewBox="0 0 18 16"><rect width="18" height="16" fill="#fff"/><path d="M3 3 L7.5 6.5 L3 10" fill="none" stroke="#000" stroke-width="1.8"/><path d="M8 12 H14" stroke="#000" stroke-width="1.8"/></svg>
<div class="t" style="left:601.5px;top:1021.80px;font-size:17px;color:#fff;">Terminal</div>
<svg style="left:693px;top:1022px;" width="18" height="14" viewBox="0 0 18 14"><path d="M2 1.5 H17 M2 7 H10 M2 12.5 H15" stroke="#fff" stroke-width="2.8"/></svg>
<div class="t" style="left:718px;top:1021.80px;font-size:17px;color:#fff;">Logcat</div>
<svg style="left:795px;top:1024px;" width="20" height="12" viewBox="0 0 20 12"><path d="M2 12 A8 8 0 0 1 18 12" fill="none" stroke="#fff" stroke-width="2.8"/><path d="M9 11 L14 4" stroke="#fff" stroke-width="2.6"/></svg>
<div class="t" style="left:820px;top:1021.80px;font-size:17px;color:#fff;">Profiler</div>
<svg style="left:909px;top:1019px;" width="18" height="20" viewBox="0 0 18 20"><rect x="4" y="0" width="10" height="9" rx="3" fill="#fff"/><rect x="0" y="7" width="18" height="4" fill="#fff"/><rect x="3" y="10" width="12" height="10" rx="3" fill="#fff"/><rect x="0" y="13" width="18" height="2" fill="#fff"/></svg>
<div class="t" style="left:933px;top:1021.80px;font-size:17px;color:#fff;">App Inspection</div>
<svg style="left:1602px;top:1020px;" width="21" height="21" viewBox="0 0 21 21"><path d="M10 1.5 A8.5 8.5 0 1 0 18.5 10 V1.5 Z" fill="none" stroke="#fff" stroke-width="2" transform="rotate(90 10 10)"/></svg>
<div class="t" style="left:1628px;top:1021.80px;font-size:17px;color:#fff;">Event Log</div>
<svg style="left:1729px;top:1019px;" width="21" height="21" viewBox="0 0 21 21"><path d="M1 12 V1 H12" fill="none" stroke="#fff" stroke-width="1.6"/><path d="M4 15 V4 H15 V7" fill="none" stroke="#fff" stroke-width="1.6"/><circle cx="12" cy="13" r="4" fill="none" stroke="#fff" stroke-width="2"/><path d="M15 16 L19.5 20.5" stroke="#fff" stroke-width="2.4"/></svg>
<div class="t" style="left:1754px;top:1021.80px;font-size:17px;color:#fff;">Layout Inspector</div>
<div style="position:absolute;left:0px;top:1045px;width:1920px;height:1px;background:#c8c8c8;"></div>
<svg style="left:11px;top:1052px;" width="19" height="19" viewBox="0 0 19 19"><path d="M1 5 V18 H14" fill="none" stroke="#ddd" stroke-width="1.8"/><rect x="4.5" y="1" width="13.5" height="13" fill="none" stroke="#ddd" stroke-width="1.8"/></svg>
<div style="position:absolute;left:40px;top:1046px;width:1364px;height:31px;overflow:hidden;">
<div class="t" style="left:3px;top:5.31px;font-size:17px;color:#fff;letter-spacing:-0.105px;">'java.lang.Object kotlinx.coroutines.channels.Channel.trySend-JP2dKIU(java.lang.Object)' java.lang.NoSuchMethodError: 'java.lang.Object kotlinx.coroutines.channels.Channel.trySend-J... (moments ago)</div>
</div>
<div class="t" style="left:1453.5px;top:1051.31px;font-size:17px;color:#fff;">40:30</div>
<div class="t" style="left:1512px;top:1051.31px;font-size:17px;color:#fff;">CRLF</div>
<div class="t" style="left:1576px;top:1051.31px;font-size:17px;color:#fff;">UTF-8</div>
<div class="t" style="left:1641px;top:1051.31px;font-size:17px;color:#fff;">2 spaces</div>
<svg style="left:1722px;top:1050px;" width="16" height="22" viewBox="0 0 16 22"><circle cx="3" cy="3" r="2.4" fill="#fff"/><circle cx="13" cy="3" r="2.4" fill="#fff"/><circle cx="3" cy="19" r="2.4" fill="#fff"/><path d="M3 3 V19 M13 3 C13 11 3 10 3 16" fill="none" stroke="#fff" stroke-width="2.2"/></svg>
<div class="t" style="left:1745px;top:1051.31px;font-size:17px;color:#fff;">master</div>
<svg style="left:1807px;top:1052px;" width="19" height="19" viewBox="0 0 19 19"><path d="M3 8 V5 A4.5 4.5 0 0 1 12 5" fill="none" stroke="#fff" stroke-width="2.4"/><rect x="6" y="9" width="12" height="10" fill="#fff"/></svg>
<svg style="left:1847px;top:1051px;" width="20" height="20" viewBox="0 0 20 20"><circle cx="10" cy="10" r="9.5" fill="#ff3838"/><path d="M10 4 V11" stroke="#000" stroke-width="2.6"/><circle cx="10" cy="15" r="1.6" fill="#000"/></svg>
<svg style="left:1884px;top:1052px;" width="19" height="17" viewBox="0 0 19 17"><path d="M3 0 H16 A3 3 0 0 1 19 3 V17 L14 14 H3 A3 3 0 0 1 0 11 V3 A3 3 0 0 1 3 0 Z" fill="#fff"/><path d="M9.5 2 V8.5" stroke="#000" stroke-width="2.6"/><rect x="8.2" y="10" width="2.6" height="2.6" fill="#000"/></svg>
<div style="position:absolute;left:0px;top:1077px;width:1920px;height:1px;background:#c8c8c8;"></div>
<div style="position:absolute;left:0px;top:1078px;width:1920px;height:2px;background:#1e1e1e;"></div>
</body></html>
